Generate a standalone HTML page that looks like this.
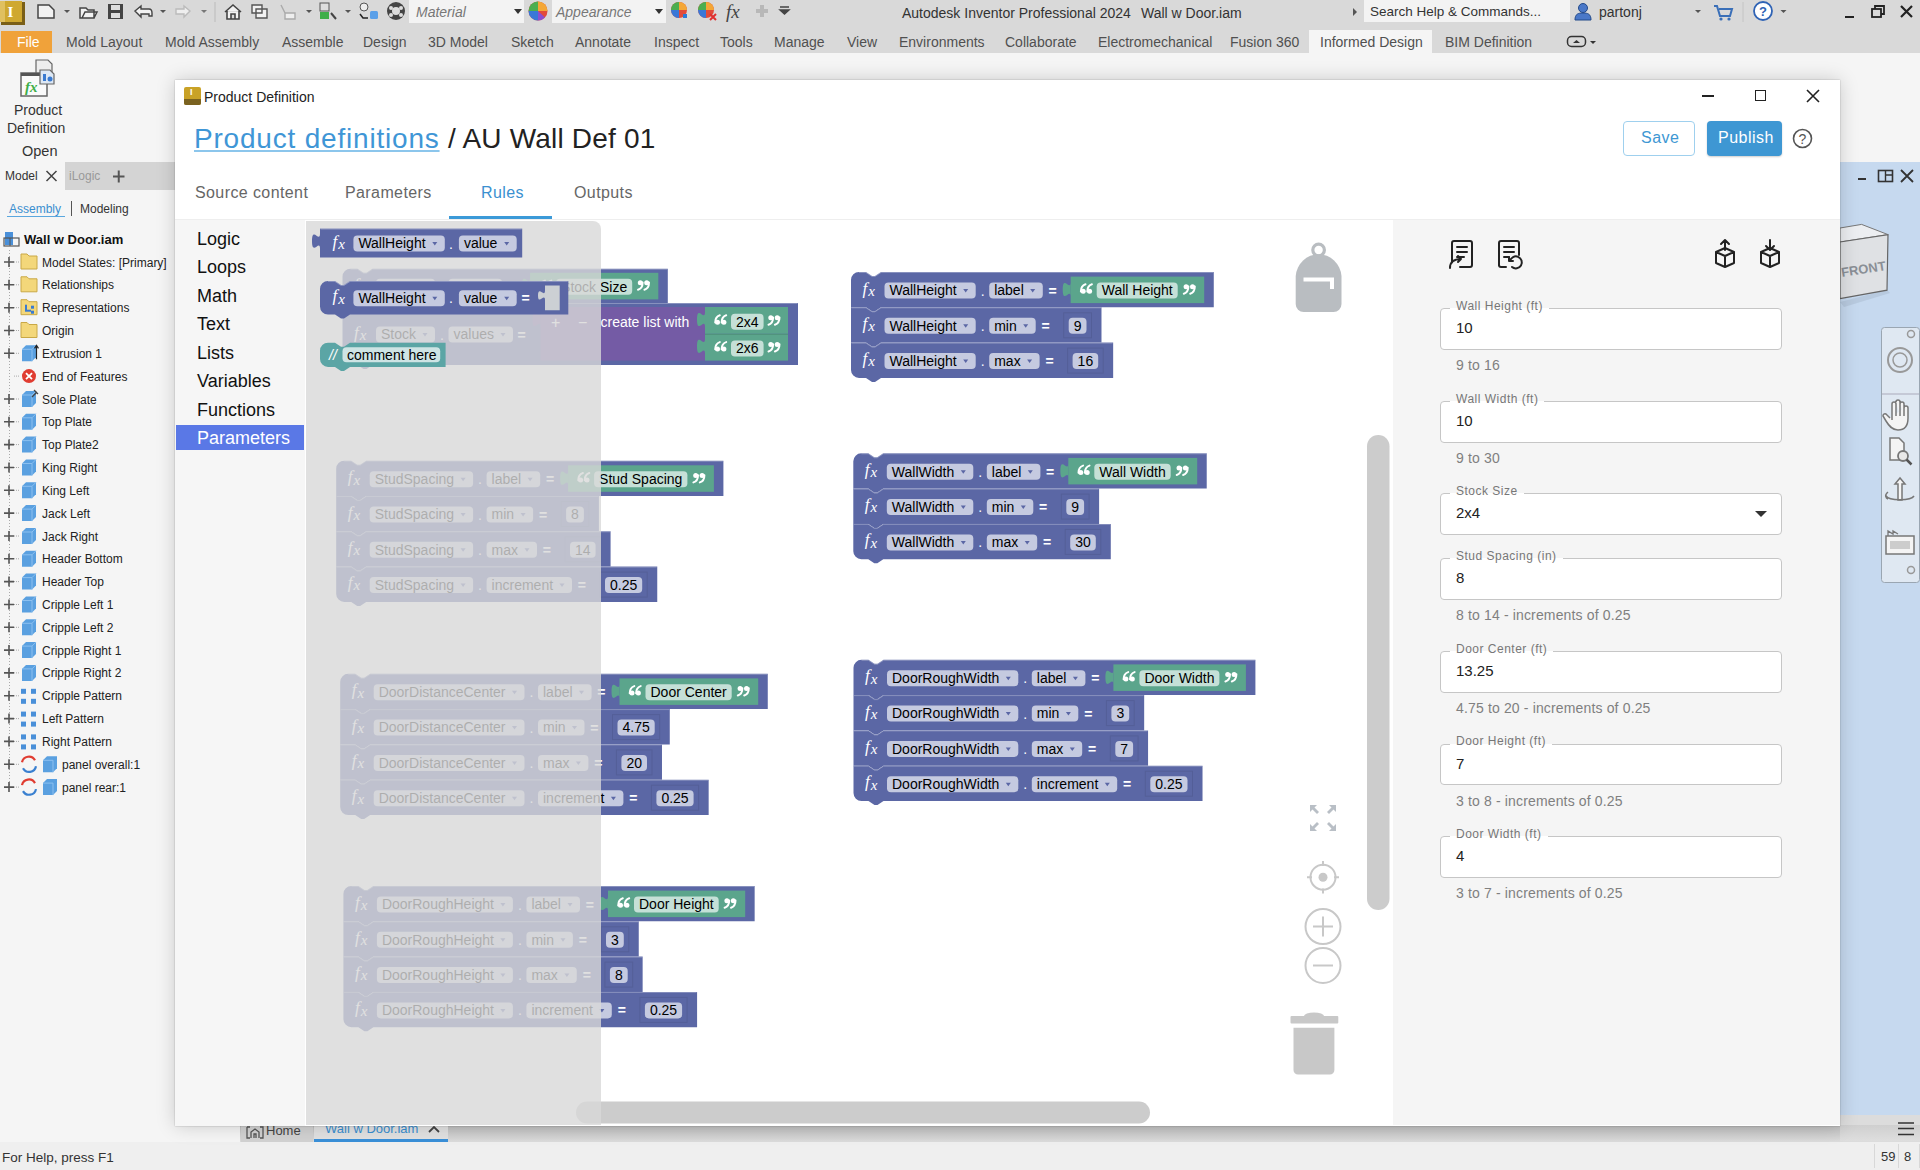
<!DOCTYPE html><html><head><meta charset="utf-8"><style>
*{margin:0;padding:0;box-sizing:border-box}
html,body{width:1920px;height:1170px;overflow:hidden;background:#f5f5f5;font-family:"Liberation Sans",sans-serif;position:relative}
.a{position:absolute}
.t{position:absolute;white-space:nowrap;line-height:1}
</style></head><body>
<div class="a" style="left:0px;top:0px;width:1920px;height:53px;background:#d9d9d9"></div><div class="a" style="left:0px;top:53px;width:1920px;height:109px;background:#f5f5f5"></div><div class="a" style="left:1px;top:31px;width:51px;height:22px;background:#f0a23a"></div><div class="t" style="left:17px;top:35px;font-size:14px;color:#fff;">File</div><div class="a" style="left:1309px;top:30px;width:123px;height:23px;background:#f5f5f5"></div><div class="t" style="left:66px;top:35px;font-size:14px;color:#505050;">Mold Layout</div><div class="t" style="left:165px;top:35px;font-size:14px;color:#505050;">Mold Assembly</div><div class="t" style="left:282px;top:35px;font-size:14px;color:#505050;">Assemble</div><div class="t" style="left:363px;top:35px;font-size:14px;color:#505050;">Design</div><div class="t" style="left:428px;top:35px;font-size:14px;color:#505050;">3D Model</div><div class="t" style="left:511px;top:35px;font-size:14px;color:#505050;">Sketch</div><div class="t" style="left:575px;top:35px;font-size:14px;color:#505050;">Annotate</div><div class="t" style="left:654px;top:35px;font-size:14px;color:#505050;">Inspect</div><div class="t" style="left:720px;top:35px;font-size:14px;color:#505050;">Tools</div><div class="t" style="left:774px;top:35px;font-size:14px;color:#505050;">Manage</div><div class="t" style="left:847px;top:35px;font-size:14px;color:#505050;">View</div><div class="t" style="left:899px;top:35px;font-size:14px;color:#505050;">Environments</div><div class="t" style="left:1005px;top:35px;font-size:14px;color:#505050;">Collaborate</div><div class="t" style="left:1098px;top:35px;font-size:14px;color:#505050;">Electromechanical</div><div class="t" style="left:1230px;top:35px;font-size:14px;color:#505050;">Fusion 360</div><div class="t" style="left:1320px;top:35px;font-size:14px;color:#505050;">Informed Design</div><div class="t" style="left:1445px;top:35px;font-size:14px;color:#505050;">BIM Definition</div><svg class="a" style="left:1566px;top:34px" width="34" height="16"><rect x="1.5" y="2.5" width="18" height="10" rx="4" stroke="#333" stroke-width="1.5" fill="none"/><path d="M7,9 l3.5,-3 3.5,3 z" fill="#333"/><path d="M24,7 h6 l-3,3 z" fill="#333"/></svg><div class="t" style="left:902px;top:6px;font-size:14px;color:#333;">Autodesk Inventor Professional 2024</div><div class="t" style="left:1141px;top:6px;font-size:14px;color:#333;">Wall w Door.iam</div><div class="a" style="left:409px;top:0px;width:115px;height:23px;background:#f3f3f3"></div><div class="t" style="left:416px;top:5px;font-size:14px;color:#777;font-style:italic">Material</div><div class="a" style="left:552px;top:0px;width:114px;height:23px;background:#f3f3f3"></div><div class="t" style="left:556px;top:5px;font-size:14px;color:#777;font-style:italic">Appearance</div><div class="a" style="left:1364px;top:0px;width:206px;height:22px;background:#f3f3f3"></div><div class="t" style="left:1370px;top:5px;font-size:13.5px;color:#333;">Search Help &amp; Commands...</div><div class="t" style="left:1599px;top:5px;font-size:14px;color:#333;">partonj</div><svg class="a" style="left:0;top:0" width="1920" height="30">
<path d="M1353,8 l4,4 -4,4 z" fill="#555"/>
<circle cx="1583" cy="8" r="4.5" fill="#4a78c8" stroke="#234a8a"/><path d="M1575,20 c0,-6 3,-7 8,-7 s8,1 8,7 z" fill="#4a78c8" stroke="#234a8a"/>
<path d="M1695,10 h6 l-3,3 z" fill="#555"/>
<path d="M1714,6 h3 l3,10 h10 l2,-7 h-13" stroke="#3a6fb8" stroke-width="2" fill="none"/><circle cx="1721" cy="19" r="1.6" fill="#3a6fb8"/><circle cx="1729" cy="19" r="1.6" fill="#3a6fb8"/>
<path d="M1743,2 v20" stroke="#c4c4c4"/>
<circle cx="1763" cy="11" r="9" stroke="#2f63b5" stroke-width="1.8" fill="#fff"/><text x="1763" y="16" text-anchor="middle" font-size="13" font-weight="bold" fill="#2f63b5" font-family="Liberation Sans">?</text>
<path d="M1780.5,10 h6 l-3,3 z" fill="#555"/>
<path d="M1845,17 h9" stroke="#222" stroke-width="2"/>
<rect x="1872" y="9" width="9" height="8" stroke="#222" stroke-width="1.8" fill="none"/><path d="M1875,9 v-3 h9 v8 h-3" stroke="#222" stroke-width="1.8" fill="none"/>
<path d="M1901,6 l11,11 M1912,6 l-11,11" stroke="#222" stroke-width="2.2"/>
<rect x="1" y="2" width="24" height="23" fill="#7a5f17"/><rect x="0" y="1" width="22" height="21" fill="#cfa830"/><rect x="0" y="1" width="5" height="21" fill="#e0c060"/>
<text x="10.5" y="17" text-anchor="middle" font-size="15" font-weight="bold" fill="#fff" font-family="Liberation Serif">I</text>
<path d="M38,5 h11 l5,5 v8 h-16 z" stroke="#444" stroke-width="1.5" fill="#f2f2f2"/><path d="M64,10 h6 l-3,3 z" fill="#555"/>
<path d="M80,8 h6 l2,2 h6 v8 h-14 z M82,18 l3,-6 h12 l-3,6" stroke="#444" stroke-width="1.5" fill="#f2f2f2"/>
<path d="M108,4 h15 v15 h-15 z" fill="#444"/><rect x="111" y="5" width="9" height="5" fill="#ddd"/><rect x="111" y="13" width="9" height="5" fill="#ddd"/>
<path d="M135,11 l6,-5 v3 h8 c2,0 3,2 3,4 v3 h-3 v-2 h-8 v3 z" stroke="#444" stroke-width="1.4" fill="#f2f2f2"/><path d="M160,10 h6 l-3,3 z" fill="#555"/>
<path d="M190,11 l-6,-5 v3 h-8 v5 h8 v3 z" stroke="#bbb" stroke-width="1.4" fill="#eee"/><path d="M201,10 h6 l-3,3 z" fill="#777"/>
<path d="M215,2 v20" stroke="#bbb"/>
<path d="M225,12 l8,-7 8,7 M227,11 v8 h12 v-8 M231,19 v-5 h4 v5" stroke="#444" stroke-width="1.6" fill="#f2f2f2"/>
<path d="M252,5 h10 v8 h-10 z M256,9 h11 v9 h-11 z" stroke="#555" stroke-width="1.4" fill="#f2f2f2"/>
<path d="M281,5 l4,8 M285,13 h10 v6 h-10 z" stroke="#aaa" stroke-width="1.4" fill="#eee"/><path d="M306,10 h6 l-3,3 z" fill="#555"/>
<rect x="320" y="3" width="9" height="8" stroke="#555" fill="#ddd"/><rect x="320" y="12" width="9" height="7" fill="#3fae49"/><path d="M331,13 l5,6" stroke="#444" stroke-width="2"/><path d="M345,10 h6 l-3,3 z" fill="#555"/>
<circle cx="364" cy="7" r="4" stroke="#555" fill="#eee"/><path d="M360,14 l3,4 h5" stroke="#222" stroke-width="1.5" fill="none"/><rect x="370" y="11" width="8" height="8" rx="1.5" fill="#5ba0e8"/>
<circle cx="396" cy="11" r="9" fill="#444"/><circle cx="396" cy="11" r="4" fill="#ddd"/><circle cx="391" cy="8" r="2" fill="#ddd"/><circle cx="401" cy="8" r="2" fill="#ddd"/><circle cx="391" cy="15" r="2" fill="#ddd"/><circle cx="401" cy="15" r="2" fill="#ddd"/>
<path d="M514,9 h8 l-4,5 z" fill="#333"/>
<circle cx="538" cy="11" r="9.5" fill="#e24b3b"/><path d="M538,11 L538,1.5 A9.5,9.5 0 0 1 547.5,11 z" fill="#f4a736"/><path d="M538,11 L528.5,11 A9.5,9.5 0 0 1 538,1.5 z" fill="#4cae4f"/><path d="M538,11 L528.5,11 A9.5,9.5 0 0 0 538,20.5 z" fill="#3a78d8"/><path d="M538,11 L538,20.5 A9.5,9.5 0 0 0 545,17.5 z" fill="#8a4fd0"/>
<path d="M655,9 h8 l-4,5 z" fill="#333"/>
<circle cx="679" cy="10" r="8" fill="#e24b3b"/><path d="M679,10 L679,2 A8,8 0 0 1 687,10 z" fill="#f4a736"/><path d="M679,10 L671,10 A8,8 0 0 1 679,2 z" fill="#4cae4f"/><path d="M679,10 L671,10 A8,8 0 0 0 679,18 z" fill="#3a78d8"/><rect x="683" y="14" width="4" height="4" fill="#2a7ad8"/>
<circle cx="706" cy="10" r="8" fill="#e24b3b"/><path d="M706,10 L706,2 A8,8 0 0 1 714,10 z" fill="#f4a736"/><path d="M706,10 L698,10 A8,8 0 0 1 706,2 z" fill="#4cae4f"/><path d="M706,10 L698,10 A8,8 0 0 0 706,18 z" fill="#3a78d8"/><path d="M710,14 l6,6 M716,14 l-6,6" stroke="#e03030" stroke-width="2"/>
<text x="726" y="18" font-size="19" font-style="italic" fill="#444" font-family="Liberation Serif">fx</text>
<path d="M756,11 h12 M762,5 v12" stroke="#b8b8b8" stroke-width="4"/>
<path d="M780,7 h9 M780,10 h9 l-4.5,4 z" stroke="#444" stroke-width="1.4" fill="#444"/>
</svg><div class="t" style="left:14px;top:103px;font-size:14px;color:#333;">Product</div><div class="t" style="left:7px;top:121px;font-size:14px;color:#333;">Definition</div><div class="t" style="left:22px;top:144px;font-size:14.5px;color:#333;">Open</div><div class="a" style="left:0px;top:162px;width:175px;height:28px;background:#d4d4d4"></div><div class="a" style="left:0px;top:162px;width:65px;height:28px;background:#f5f5f5"></div><div class="t" style="left:5px;top:170px;font-size:12px;color:#333;">Model</div><div class="t" style="left:69px;top:170px;font-size:12px;color:#999;">iLogic</div><div class="t" style="left:9px;top:203px;font-size:12px;color:#3a8fd0;">Assembly</div><div class="a" style="left:7px;top:216px;width:58px;height:1px;background:#5aa7df"></div><div class="a" style="left:71px;top:201px;width:1px;height:15px;background:#555"></div><div class="t" style="left:80px;top:203px;font-size:12px;color:#333;">Modeling</div><svg class="a" style="left:0;top:0" width="180" height="800">
<path d="M46.5,171 l10,10 M56.5,171 l-10,10" stroke="#444" stroke-width="1.5"/>
<path d="M113,176.5 h11.5 M118.75,170.5 v12" stroke="#555" stroke-width="2"/>
<path d="M9.5,250 V787" stroke="#aaa" stroke-dasharray="1,2"/>
<rect x="5" y="232" width="8" height="13" fill="#4a90d9"/><rect x="4" y="238" width="15" height="8" fill="none" stroke="#555" stroke-width="1.2"/>
<path d="M10,238 v8" stroke="#555" stroke-width="1"/>
<path d="M4,262.0 h10 M9,257.0 v10" stroke="#555" stroke-width="1.6"/><path d="M14,262.0 h5" stroke="#aaa" stroke-dasharray="1,1"/><path d="M21,254.0 h6 l2,2 h8 v13 h-16 z" fill="#f3d77a" stroke="#c9a846" stroke-width="1"/><text x="42" y="266.5" font-size="12" fill="#222" font-family="Liberation Sans">Model States: [Primary]</text><path d="M4,284.8 h10 M9,279.8 v10" stroke="#555" stroke-width="1.6"/><path d="M14,284.8 h5" stroke="#aaa" stroke-dasharray="1,1"/><path d="M21,276.8 h6 l2,2 h8 v13 h-16 z" fill="#f3d77a" stroke="#c9a846" stroke-width="1"/><text x="42" y="289.3" font-size="12" fill="#222" font-family="Liberation Sans">Relationships</text><path d="M4,307.7 h10 M9,302.7 v10" stroke="#555" stroke-width="1.6"/><path d="M14,307.7 h5" stroke="#aaa" stroke-dasharray="1,1"/><path d="M21,299.7 h6 l2,2 h8 v13 h-16 z" fill="#f3d77a" stroke="#c9a846" stroke-width="1"/><rect x="25" y="304.7" width="2" height="6" fill="#3a7ad0"/><rect x="25" y="309.7" width="6" height="2" fill="#3a7ad0"/><rect x="31" y="305.7" width="3" height="3" fill="#3a7ad0"/><rect x="31" y="310.7" width="3" height="3" fill="#3a7ad0"/><text x="42" y="312.2" font-size="12" fill="#222" font-family="Liberation Sans">Representations</text><path d="M4,330.5 h10 M9,325.5 v10" stroke="#555" stroke-width="1.6"/><path d="M14,330.5 h5" stroke="#aaa" stroke-dasharray="1,1"/><path d="M21,322.5 h6 l2,2 h8 v13 h-16 z" fill="#f3d77a" stroke="#c9a846" stroke-width="1"/><text x="42" y="335.0" font-size="12" fill="#222" font-family="Liberation Sans">Origin</text><path d="M4,353.3 h10 M9,348.3 v10" stroke="#555" stroke-width="1.6"/><path d="M14,353.3 h5" stroke="#aaa" stroke-dasharray="1,1"/><path d="M22,349.3 l4,-4 h10 v12 l-4,4 h-10 z" fill="#5aa0e0"/><path d="M22,349.3 h10 v12" stroke="#8cc0f0" fill="none"/><path d="M32,349.3 l4,-4" stroke="#8cc0f0"/><path d="M36.5,359.3 V345.3 M34.5,348.3 l2,-3 2,3" stroke="#222" stroke-width="1.2" fill="none"/><text x="42" y="357.8" font-size="12" fill="#222" font-family="Liberation Sans">Extrusion 1</text><path d="M14,376.1 h5" stroke="#aaa" stroke-dasharray="1,1"/><circle cx="29" cy="376.1" r="7" fill="#e03c31"/><path d="M26,373.1 l6,6 M32,373.1 l-6,6" stroke="#fff" stroke-width="1.8"/><text x="42" y="380.6" font-size="12" fill="#222" font-family="Liberation Sans">End of Features</text><path d="M4,399.0 h10 M9,394.0 v10" stroke="#555" stroke-width="1.6"/><path d="M14,399.0 h5" stroke="#aaa" stroke-dasharray="1,1"/><path d="M22,395.0 l4,-4 h10 v12 l-4,4 h-10 z" fill="#5aa0e0"/><path d="M22,395.0 h10 v12" stroke="#8cc0f0" fill="none"/><path d="M32,395.0 l4,-4" stroke="#8cc0f0"/><path d="M32,397.0 l5,-5 M34,390.0 l4,4" stroke="#444" stroke-width="1.3" fill="none"/><text x="42" y="403.5" font-size="12" fill="#222" font-family="Liberation Sans">Sole Plate</text><path d="M4,421.8 h10 M9,416.8 v10" stroke="#555" stroke-width="1.6"/><path d="M14,421.8 h5" stroke="#aaa" stroke-dasharray="1,1"/><path d="M22,417.8 l4,-4 h10 v12 l-4,4 h-10 z" fill="#5aa0e0"/><path d="M22,417.8 h10 v12" stroke="#8cc0f0" fill="none"/><path d="M32,417.8 l4,-4" stroke="#8cc0f0"/><text x="42" y="426.3" font-size="12" fill="#222" font-family="Liberation Sans">Top Plate</text><path d="M4,444.6 h10 M9,439.6 v10" stroke="#555" stroke-width="1.6"/><path d="M14,444.6 h5" stroke="#aaa" stroke-dasharray="1,1"/><path d="M22,440.6 l4,-4 h10 v12 l-4,4 h-10 z" fill="#5aa0e0"/><path d="M22,440.6 h10 v12" stroke="#8cc0f0" fill="none"/><path d="M32,440.6 l4,-4" stroke="#8cc0f0"/><text x="42" y="449.1" font-size="12" fill="#222" font-family="Liberation Sans">Top Plate2</text><path d="M4,467.5 h10 M9,462.5 v10" stroke="#555" stroke-width="1.6"/><path d="M14,467.5 h5" stroke="#aaa" stroke-dasharray="1,1"/><path d="M22,463.5 l4,-4 h10 v12 l-4,4 h-10 z" fill="#5aa0e0"/><path d="M22,463.5 h10 v12" stroke="#8cc0f0" fill="none"/><path d="M32,463.5 l4,-4" stroke="#8cc0f0"/><text x="42" y="472.0" font-size="12" fill="#222" font-family="Liberation Sans">King Right</text><path d="M4,490.3 h10 M9,485.3 v10" stroke="#555" stroke-width="1.6"/><path d="M14,490.3 h5" stroke="#aaa" stroke-dasharray="1,1"/><path d="M22,486.3 l4,-4 h10 v12 l-4,4 h-10 z" fill="#5aa0e0"/><path d="M22,486.3 h10 v12" stroke="#8cc0f0" fill="none"/><path d="M32,486.3 l4,-4" stroke="#8cc0f0"/><text x="42" y="494.8" font-size="12" fill="#222" font-family="Liberation Sans">King Left</text><path d="M4,513.1 h10 M9,508.1 v10" stroke="#555" stroke-width="1.6"/><path d="M14,513.1 h5" stroke="#aaa" stroke-dasharray="1,1"/><path d="M22,509.1 l4,-4 h10 v12 l-4,4 h-10 z" fill="#5aa0e0"/><path d="M22,509.1 h10 v12" stroke="#8cc0f0" fill="none"/><path d="M32,509.1 l4,-4" stroke="#8cc0f0"/><text x="42" y="517.6" font-size="12" fill="#222" font-family="Liberation Sans">Jack Left</text><path d="M4,536.0 h10 M9,531.0 v10" stroke="#555" stroke-width="1.6"/><path d="M14,536.0 h5" stroke="#aaa" stroke-dasharray="1,1"/><path d="M22,532.0 l4,-4 h10 v12 l-4,4 h-10 z" fill="#5aa0e0"/><path d="M22,532.0 h10 v12" stroke="#8cc0f0" fill="none"/><path d="M32,532.0 l4,-4" stroke="#8cc0f0"/><text x="42" y="540.5" font-size="12" fill="#222" font-family="Liberation Sans">Jack Right</text><path d="M4,558.8 h10 M9,553.8 v10" stroke="#555" stroke-width="1.6"/><path d="M14,558.8 h5" stroke="#aaa" stroke-dasharray="1,1"/><path d="M22,554.8 l4,-4 h10 v12 l-4,4 h-10 z" fill="#5aa0e0"/><path d="M22,554.8 h10 v12" stroke="#8cc0f0" fill="none"/><path d="M32,554.8 l4,-4" stroke="#8cc0f0"/><text x="42" y="563.3" font-size="12" fill="#222" font-family="Liberation Sans">Header Bottom</text><path d="M4,581.6 h10 M9,576.6 v10" stroke="#555" stroke-width="1.6"/><path d="M14,581.6 h5" stroke="#aaa" stroke-dasharray="1,1"/><path d="M22,577.6 l4,-4 h10 v12 l-4,4 h-10 z" fill="#5aa0e0"/><path d="M22,577.6 h10 v12" stroke="#8cc0f0" fill="none"/><path d="M32,577.6 l4,-4" stroke="#8cc0f0"/><text x="42" y="586.1" font-size="12" fill="#222" font-family="Liberation Sans">Header Top</text><path d="M4,604.5 h10 M9,599.5 v10" stroke="#555" stroke-width="1.6"/><path d="M14,604.5 h5" stroke="#aaa" stroke-dasharray="1,1"/><path d="M22,600.5 l4,-4 h10 v12 l-4,4 h-10 z" fill="#5aa0e0"/><path d="M22,600.5 h10 v12" stroke="#8cc0f0" fill="none"/><path d="M32,600.5 l4,-4" stroke="#8cc0f0"/><text x="42" y="609.0" font-size="12" fill="#222" font-family="Liberation Sans">Cripple Left 1</text><path d="M4,627.3 h10 M9,622.3 v10" stroke="#555" stroke-width="1.6"/><path d="M14,627.3 h5" stroke="#aaa" stroke-dasharray="1,1"/><path d="M22,623.3 l4,-4 h10 v12 l-4,4 h-10 z" fill="#5aa0e0"/><path d="M22,623.3 h10 v12" stroke="#8cc0f0" fill="none"/><path d="M32,623.3 l4,-4" stroke="#8cc0f0"/><text x="42" y="631.8" font-size="12" fill="#222" font-family="Liberation Sans">Cripple Left 2</text><path d="M4,650.1 h10 M9,645.1 v10" stroke="#555" stroke-width="1.6"/><path d="M14,650.1 h5" stroke="#aaa" stroke-dasharray="1,1"/><path d="M22,646.1 l4,-4 h10 v12 l-4,4 h-10 z" fill="#5aa0e0"/><path d="M22,646.1 h10 v12" stroke="#8cc0f0" fill="none"/><path d="M32,646.1 l4,-4" stroke="#8cc0f0"/><text x="42" y="654.6" font-size="12" fill="#222" font-family="Liberation Sans">Cripple Right 1</text><path d="M4,672.9 h10 M9,667.9 v10" stroke="#555" stroke-width="1.6"/><path d="M14,672.9 h5" stroke="#aaa" stroke-dasharray="1,1"/><path d="M22,668.9 l4,-4 h10 v12 l-4,4 h-10 z" fill="#5aa0e0"/><path d="M22,668.9 h10 v12" stroke="#8cc0f0" fill="none"/><path d="M32,668.9 l4,-4" stroke="#8cc0f0"/><text x="42" y="677.4" font-size="12" fill="#222" font-family="Liberation Sans">Cripple Right 2</text><path d="M4,695.8 h10 M9,690.8 v10" stroke="#555" stroke-width="1.6"/><path d="M14,695.8 h5" stroke="#aaa" stroke-dasharray="1,1"/><rect x="21" y="688.8" width="5" height="5" fill="#4a90d9"/><rect x="31" y="688.8" width="5" height="5" fill="#4a90d9"/><rect x="21" y="698.8" width="5" height="5" fill="#4a90d9"/><rect x="31" y="698.8" width="5" height="5" fill="#4a90d9"/><text x="42" y="700.3" font-size="12" fill="#222" font-family="Liberation Sans">Cripple Pattern</text><path d="M4,718.6 h10 M9,713.6 v10" stroke="#555" stroke-width="1.6"/><path d="M14,718.6 h5" stroke="#aaa" stroke-dasharray="1,1"/><rect x="21" y="711.6" width="5" height="5" fill="#4a90d9"/><rect x="31" y="711.6" width="5" height="5" fill="#4a90d9"/><rect x="21" y="721.6" width="5" height="5" fill="#4a90d9"/><rect x="31" y="721.6" width="5" height="5" fill="#4a90d9"/><text x="42" y="723.1" font-size="12" fill="#222" font-family="Liberation Sans">Left Pattern</text><path d="M4,741.4 h10 M9,736.4 v10" stroke="#555" stroke-width="1.6"/><path d="M14,741.4 h5" stroke="#aaa" stroke-dasharray="1,1"/><rect x="21" y="734.4" width="5" height="5" fill="#4a90d9"/><rect x="31" y="734.4" width="5" height="5" fill="#4a90d9"/><rect x="21" y="744.4" width="5" height="5" fill="#4a90d9"/><rect x="31" y="744.4" width="5" height="5" fill="#4a90d9"/><text x="42" y="745.9" font-size="12" fill="#222" font-family="Liberation Sans">Right Pattern</text><path d="M4,764.3 h10 M9,759.3 v10" stroke="#555" stroke-width="1.6"/><path d="M14,764.3 h5" stroke="#aaa" stroke-dasharray="1,1"/><path d="M22,762.3 a7,7 0 0 1 13,-2" stroke="#e03c31" stroke-width="2.2" fill="none"/><path d="M36,766.3 a7,7 0 0 1 -13,2" stroke="#3a80d0" stroke-width="2.2" fill="none"/><path d="M43,760.3 l4,-4 h10 v12 l-4,4 h-10 z" fill="#5aa0e0"/><path d="M43,760.3 h10 v12" stroke="#8cc0f0" fill="none"/><text x="62" y="768.8" font-size="12" fill="#222" font-family="Liberation Sans">panel overall:1</text><path d="M4,787.1 h10 M9,782.1 v10" stroke="#555" stroke-width="1.6"/><path d="M14,787.1 h5" stroke="#aaa" stroke-dasharray="1,1"/><path d="M22,785.1 a7,7 0 0 1 13,-2" stroke="#e03c31" stroke-width="2.2" fill="none"/><path d="M36,789.1 a7,7 0 0 1 -13,2" stroke="#3a80d0" stroke-width="2.2" fill="none"/><path d="M43,783.1 l4,-4 h10 v12 l-4,4 h-10 z" fill="#5aa0e0"/><path d="M43,783.1 h10 v12" stroke="#8cc0f0" fill="none"/><text x="62" y="791.6" font-size="12" fill="#222" font-family="Liberation Sans">panel rear:1</text><text x="24" y="243.5" font-size="13" font-weight="bold" fill="#111" font-family="Liberation Sans">Wall w Door.iam</text></svg><svg class="a" style="left:18px;top:58px" width="42" height="42">
<path d="M18,2 h12 l4,4 v10 h-16 z" fill="#eee" stroke="#666" stroke-width="1.2"/>
<rect x="3" y="15" width="26" height="23" fill="#fafafa" stroke="#666" stroke-width="1.5"/><rect x="3" y="15" width="26" height="3" fill="#555"/>
<text x="7" y="34" font-size="15" font-style="italic" font-weight="bold" fill="#3fae49" font-family="Liberation Serif">fx</text>
<path d="M22,12 h10 l4,4 v10 h-14 z" fill="#dde8f5" stroke="#666" stroke-width="1.2"/><rect x="25" y="16" width="3" height="7" fill="#3a7ad0"/><circle cx="32" cy="21" r="2.5" fill="#3a7ad0"/>
</svg><div class="a" style="left:0px;top:1142px;width:1920px;height:28px;background:#efefef"></div><div class="t" style="left:2px;top:1151px;font-size:13.5px;color:#333;">For Help, press F1</div><div class="a" style="left:1840px;top:162px;width:80px;height:953px;background:#c6d9ef"></div><div class="a" style="left:1840px;top:1115px;width:80px;height:27px;background:#dcdcdc"></div><svg class="a" style="left:1840px;top:162px" width="80" height="978">
<path d="M18,17 h8" stroke="#333" stroke-width="2"/>
<rect x="38.5" y="8.5" width="14" height="11" stroke="#333" stroke-width="1.6" fill="none"/><path d="M45.5,8.5 v11 M45.5,13 h7" stroke="#333" stroke-width="1.4"/>
<path d="M61,8 l12,12 M73,8 l-12,12" stroke="#333" stroke-width="1.8"/>
<path d="M0,140 L47,128 L50,131 L4,145 Z" fill="#aabbd0" opacity="0.5"/>
<path d="M0,66 L21.6,62.4 L48,72.6 L0,80 Z" fill="#eceef1" stroke="#777" stroke-width="1"/>
<path d="M0,80 L48,72.6 L47,128.2 L0,136.7 Z" fill="#dfe1e4" stroke="#666" stroke-width="1.2"/>
<text x="2" y="115" font-size="13" font-weight="bold" fill="#8a8f96" font-family="Liberation Sans" transform="rotate(-9 2 115)">FRONT</text>
<rect x="41.5" y="165.5" width="38" height="255" rx="3" fill="#dfe8f2" stroke="#9aa6b2"/>
<circle cx="71" cy="172" r="3.5" fill="none" stroke="#999" stroke-width="1.5"/>
<circle cx="71" cy="408" r="3.5" fill="none" stroke="#999" stroke-width="1.5"/>
<circle cx="60" cy="198" r="12" fill="none" stroke="#999" stroke-width="2"/><circle cx="60" cy="198" r="7" fill="none" stroke="#999" stroke-width="1.5"/>
<path d="M42,232 h37" stroke="#aab"/>
<path d="M52,258 v-16 a2,2 0 0 1 4,0 v12 M56,240 a2,2 0 0 1 4,0 v14 M60,242 a2,2 0 0 1 4,0 v12 M64,246 a2,2 0 0 1 4,0 v10 c0,8 -4,12 -10,12 c-6,0 -9,-4 -12,-9 l-3,-5 a2,2 0 0 1 3,-2 l4,4" stroke="#777" stroke-width="1.5" fill="#f4f4f4"/>
<path d="M50,276 h9 l5,5 v17 h-14 z" stroke="#777" stroke-width="1.5" fill="#f4f4f4"/><circle cx="63" cy="294" r="5" stroke="#777" stroke-width="1.8" fill="#e8e8e8"/><path d="M66.5,297.5 l5,5" stroke="#555" stroke-width="2.5"/>
<path d="M60,316 l-5,6 h3 v16 h4 v-16 h3 z" stroke="#777" stroke-width="1.5" fill="#f4f4f4"/><path d="M46,334 c3,5 25,5 28,0 M48,330 c-4,3 -2,6 0,7" stroke="#777" stroke-width="1.5" fill="none"/>
<rect x="46" y="374" width="28" height="18" stroke="#777" stroke-width="1.5" fill="#f4f4f4"/><rect x="50" y="379" width="20" height="8" fill="#ccc"/><path d="M48,374 v-5 l5,3 v-3 l5,3" stroke="#777" stroke-width="1.3" fill="none"/>
</svg><div class="a" style="left:240px;top:1125px;width:1600px;height:17px;background:linear-gradient(#bdbdbd,#dcdcdc)"></div><div class="a" style="left:241px;top:1125px;width:72px;height:17px;background:#d2d2d2"></div><div class="t" style="left:266px;top:1124px;font-size:13px;color:#444;">Home</div><svg class="a" style="left:245px;top:1124px" width="20" height="16"><path d="M2,3 h3 M2,3 v11 h3 M15,3 h3 v11 h-3 M6,14 v-6 l4,-3 4,3 v6 M9,14 v-4 h2 v4" stroke="#555" stroke-width="1.3" fill="none"/></svg><div class="a" style="left:314px;top:1125px;width:134px;height:14px;background:#e2e2e2"></div><div class="t" style="left:325px;top:1122px;font-size:13px;color:#3a8fd0;">Wall w Door.iam</div><svg class="a" style="left:427px;top:1124px" width="14" height="10"><path d="M2,8 l5,-5 5,5" stroke="#444" stroke-width="1.8" fill="none"/></svg><div class="a" style="left:314px;top:1138.5px;width:134px;height:3px;background:#3a90d8"></div><div class="a" style="left:1840px;top:1125px;width:80px;height:16px;background:linear-gradient(#cfcfcf,#dedede)"></div><svg class="a" style="left:1896px;top:1119px" width="20" height="18"><path d="M2,4 h16 M2,9.6 h16 M2,15.5 h16" stroke="#333" stroke-width="1.5"/></svg><div class="a" style="left:1874px;top:1144px;width:1px;height:24px;background:#d8d8d8"></div><div class="t" style="left:1881px;top:1150px;font-size:13px;color:#333;">59</div><div class="t" style="left:1904px;top:1150px;font-size:13px;color:#333;">8</div><div class="a" style="left:1898px;top:1144px;width:1px;height:24px;background:#d8d8d8"></div><div class="a" style="left:1919px;top:1144px;width:1px;height:24px;background:#d8d8d8"></div><div class="a" style="left:175px;top:80px;width:1665px;height:1046px;background:#fff;box-shadow:0 0 1.5px rgba(0,0,0,0.28),0 0 18px rgba(0,0,0,0.18)"></div><div class="t" style="left:204px;top:90px;font-size:14px;color:#222;">Product Definition</div><div class="t" style="left:194px;top:125px;font-size:28px;color:#3f96d6;letter-spacing:0.8px;text-decoration:underline;text-decoration-color:#8cc6ec;text-decoration-thickness:1.5px;text-underline-offset:2px">Product definitions</div><div class="t" style="left:448px;top:125px;font-size:28px;color:#222;letter-spacing:0.2px">/ AU Wall Def 01</div><div class="t" style="left:195px;top:185px;font-size:16px;color:#666;letter-spacing:0.4px">Source content</div><div class="t" style="left:345px;top:185px;font-size:16px;color:#666;letter-spacing:0.4px">Parameters</div><div class="t" style="left:481px;top:185px;font-size:16px;color:#3a90d0;letter-spacing:0.4px">Rules</div><div class="t" style="left:574px;top:185px;font-size:16px;color:#666;letter-spacing:0.4px">Outputs</div><div class="a" style="left:449px;top:216px;width:103px;height:3px;background:#3c9ad8"></div><div class="a" style="left:175px;top:219px;width:1665px;height:1px;background:#eee"></div><div class="a" style="left:175px;top:220px;width:130px;height:906px;background:#f6f6f6"></div><div class="a" style="left:176px;top:425.2px;width:128px;height:25px;background:#5a78e6"></div><div class="t" style="left:197px;top:229.5px;font-size:18px;color:#111;">Logic</div><div class="t" style="left:197px;top:258.07px;font-size:18px;color:#111;">Loops</div><div class="t" style="left:197px;top:286.64px;font-size:18px;color:#111;">Math</div><div class="t" style="left:197px;top:315.21000000000004px;font-size:18px;color:#111;">Text</div><div class="t" style="left:197px;top:343.78px;font-size:18px;color:#111;">Lists</div><div class="t" style="left:197px;top:372.35px;font-size:18px;color:#111;">Variables</div><div class="t" style="left:197px;top:400.92px;font-size:18px;color:#111;">Functions</div><div class="t" style="left:197px;top:429.49px;font-size:18px;color:#fff;">Parameters</div><svg class="a" style="left:0;top:0" width="1920" height="1170" font-family="Liberation Sans"><defs><clipPath id="ws"><rect x="305" y="220" width="1088" height="905"/></clipPath></defs><g clip-path="url(#ws)"><path d="M851,280.0 a8,8 0 0 1 8,-8 L866,272.0 l6,4 l3,0 l6,-4 L1213.765625,272.0 L1213.765625,307.3 L881,307.3 l-6,4 l-3,0 l-6,-4 L851,307.3 Z" fill="#5b67a5"/><path d="M859,272.5 L866,272.5 l6,4 l3,0 l6,-4 L1213.265625,272.5" stroke="rgba(255,255,255,0.28)" fill="none"/><text x="862.5" y="293.5" font-family="Liberation Serif" font-style="italic" font-size="17" fill="#fff">f</text><text x="868.3" y="295.8" font-family="Liberation Serif" font-style="italic" font-size="15" fill="#fff">x</text><rect x="884.5" y="282.5" width="91.2" height="16" rx="4" fill="#fff" fill-opacity="0.65"/><text x="889.5" y="295.3" font-size="14" fill="#000" >WallHeight</text><path d="M963.2,289.0 h5 l-2.5,3.5 z" fill="#5b67a5"/><text x="980.7" y="295.5" font-size="14" fill="#fff" >.</text><rect x="989.2" y="282.5" width="53.6" height="16" rx="4" fill="#fff" fill-opacity="0.65"/><text x="994.2" y="295.3" font-size="14" fill="#000" >label</text><path d="M1030.2,289.0 h5 l-2.5,3.5 z" fill="#5b67a5"/><text x="1048.5" y="295.5" font-size="14" fill="#fff" font-weight="bold">=</text><path d="M1070.71875,282.0 c0,10 -8,-8 -8,7.5 s8,-2.5 8,7.5 Z" fill="#5ba58c"/><rect x="1070.7" y="276.6" width="133.5" height="26.5" fill="#5ba58c"/><g fill="#fff"><circle cx="1083.2" cy="291.3" r="2.5"/><path d="M1080.9,291.5 C1080.9,288.0 1082.7,285.2 1085.5,284.3" stroke="#fff" stroke-width="2" fill="none" stroke-linecap="round"/><circle cx="1089.6" cy="291.3" r="2.5"/><path d="M1087.3,291.5 C1087.3,288.0 1089.1,285.2 1091.9,284.3" stroke="#fff" stroke-width="2" fill="none" stroke-linecap="round"/></g><rect x="1096.7" y="282.5" width="81.0" height="16" rx="4" fill="#fff" fill-opacity="0.65"/><text x="1101.7" y="295.3" font-size="14" fill="#000" >Wall Height</text><g fill="#fff" transform="rotate(180 1189.4 289.0)"><circle cx="1186.3" cy="291.3" r="2.5"/><path d="M1184.0,291.5 C1184.0,288.0 1185.8,285.2 1188.6,284.3" stroke="#fff" stroke-width="2" fill="none" stroke-linecap="round"/><circle cx="1192.7" cy="291.3" r="2.5"/><path d="M1190.4,291.5 C1190.4,288.0 1192.2,285.2 1195.0,284.3" stroke="#fff" stroke-width="2" fill="none" stroke-linecap="round"/></g><path d="M851,307.3 L866,307.3 l6,4 l3,0 l6,-4 L1101.484375,307.3 L1101.484375,342.6 L881,342.6 l-6,4 l-3,0 l-6,-4 L851,342.6 Z" fill="#5b67a5"/><path d="M851.5,307.8 L866,307.8 l6,4 l3,0 l6,-4 L1100.984375,307.8" stroke="rgba(255,255,255,0.28)" fill="none"/><text x="862.5" y="328.8" font-family="Liberation Serif" font-style="italic" font-size="17" fill="#fff">f</text><text x="868.3" y="331.1" font-family="Liberation Serif" font-style="italic" font-size="15" fill="#fff">x</text><rect x="884.5" y="317.8" width="91.2" height="16" rx="4" fill="#fff" fill-opacity="0.65"/><text x="889.5" y="330.6" font-size="14" fill="#000" >WallHeight</text><path d="M963.2,324.3 h5 l-2.5,3.5 z" fill="#5b67a5"/><text x="980.7" y="330.8" font-size="14" fill="#fff" >.</text><rect x="989.2" y="317.8" width="46.5" height="16" rx="4" fill="#fff" fill-opacity="0.65"/><text x="994.2" y="330.6" font-size="14" fill="#000" >min</text><path d="M1023.2,324.3 h5 l-2.5,3.5 z" fill="#5b67a5"/><text x="1041.5" y="330.8" font-size="14" fill="#fff" font-weight="bold">=</text><rect x="1063.7" y="312.8" width="27.8" height="25" fill="none" stroke="#000" stroke-opacity="0.08"/><rect x="1068.7" y="317.8" width="17.8" height="16" rx="4" fill="#fff" fill-opacity="0.65"/><text x="1073.7" y="330.6" font-size="14" fill="#000" >9</text><path d="M851,342.6 L866,342.6 l6,4 l3,0 l6,-4 L1113.15625,342.6 L1113.15625,377.90000000000003 L881,377.90000000000003 l-6,4 l-3,0 l-6,-4 L859,377.90000000000003 a8,8 0 0 1 -8,-8 Z" fill="#5b67a5"/><path d="M851.5,343.1 L866,343.1 l6,4 l3,0 l6,-4 L1112.65625,343.1" stroke="rgba(255,255,255,0.28)" fill="none"/><text x="862.5" y="364.1" font-family="Liberation Serif" font-style="italic" font-size="17" fill="#fff">f</text><text x="868.3" y="366.4" font-family="Liberation Serif" font-style="italic" font-size="15" fill="#fff">x</text><rect x="884.5" y="353.1" width="91.2" height="16" rx="4" fill="#fff" fill-opacity="0.65"/><text x="889.5" y="365.9" font-size="14" fill="#000" >WallHeight</text><path d="M963.2,359.6 h5 l-2.5,3.5 z" fill="#5b67a5"/><text x="980.7" y="366.1" font-size="14" fill="#fff" >.</text><rect x="989.2" y="353.1" width="50.4" height="16" rx="4" fill="#fff" fill-opacity="0.65"/><text x="994.2" y="365.9" font-size="14" fill="#000" >max</text><path d="M1027.1,359.6 h5 l-2.5,3.5 z" fill="#5b67a5"/><text x="1045.4" y="366.1" font-size="14" fill="#fff" font-weight="bold">=</text><rect x="1067.6" y="348.1" width="35.6" height="25" fill="none" stroke="#000" stroke-opacity="0.08"/><rect x="1072.6" y="353.1" width="25.6" height="16" rx="4" fill="#fff" fill-opacity="0.65"/><text x="1077.6" y="365.9" font-size="14" fill="#000" >16</text><path d="M853.3,461.3 a8,8 0 0 1 8,-8 L868.3,453.3 l6,4 l3,0 l6,-4 L1206.721875,453.3 L1206.721875,488.6 L883.3,488.6 l-6,4 l-3,0 l-6,-4 L853.3,488.6 Z" fill="#5b67a5"/><path d="M861.3,453.8 L868.3,453.8 l6,4 l3,0 l6,-4 L1206.221875,453.8" stroke="rgba(255,255,255,0.28)" fill="none"/><text x="864.8" y="474.8" font-family="Liberation Serif" font-style="italic" font-size="17" fill="#fff">f</text><text x="870.6" y="477.1" font-family="Liberation Serif" font-style="italic" font-size="15" fill="#fff">x</text><rect x="886.8" y="463.8" width="86.5" height="16" rx="4" fill="#fff" fill-opacity="0.65"/><text x="891.8" y="476.6" font-size="14" fill="#000" >WallWidth</text><path d="M960.8,470.3 h5 l-2.5,3.5 z" fill="#5b67a5"/><text x="978.3" y="476.8" font-size="14" fill="#fff" >.</text><rect x="986.8" y="463.8" width="53.6" height="16" rx="4" fill="#fff" fill-opacity="0.65"/><text x="991.8" y="476.6" font-size="14" fill="#000" >label</text><path d="M1027.8,470.3 h5 l-2.5,3.5 z" fill="#5b67a5"/><text x="1046.1" y="476.8" font-size="14" fill="#fff" font-weight="bold">=</text><path d="M1068.346875,463.3 c0,10 -8,-8 -8,7.5 s8,-2.5 8,7.5 Z" fill="#5ba58c"/><rect x="1068.3" y="457.9" width="128.9" height="26.5" fill="#5ba58c"/><g fill="#fff"><circle cx="1080.8" cy="472.6" r="2.5"/><path d="M1078.5,472.8 C1078.5,469.3 1080.3,466.5 1083.1,465.6" stroke="#fff" stroke-width="2" fill="none" stroke-linecap="round"/><circle cx="1087.2" cy="472.6" r="2.5"/><path d="M1084.9,472.8 C1084.9,469.3 1086.7,466.5 1089.5,465.6" stroke="#fff" stroke-width="2" fill="none" stroke-linecap="round"/></g><rect x="1094.3" y="463.8" width="76.4" height="16" rx="4" fill="#fff" fill-opacity="0.65"/><text x="1099.3" y="476.6" font-size="14" fill="#000" >Wall Width</text><g fill="#fff" transform="rotate(180 1182.3 470.3)"><circle cx="1179.2" cy="472.6" r="2.5"/><path d="M1176.9,472.8 C1176.9,469.3 1178.7,466.5 1181.5,465.6" stroke="#fff" stroke-width="2" fill="none" stroke-linecap="round"/><circle cx="1185.6" cy="472.6" r="2.5"/><path d="M1183.3,472.8 C1183.3,469.3 1185.1,466.5 1187.9,465.6" stroke="#fff" stroke-width="2" fill="none" stroke-linecap="round"/></g><path d="M853.3,488.6 L868.3,488.6 l6,4 l3,0 l6,-4 L1099.1125,488.6 L1099.1125,523.9 L883.3,523.9 l-6,4 l-3,0 l-6,-4 L853.3,523.9 Z" fill="#5b67a5"/><path d="M853.8,489.1 L868.3,489.1 l6,4 l3,0 l6,-4 L1098.6125,489.1" stroke="rgba(255,255,255,0.28)" fill="none"/><text x="864.8" y="510.1" font-family="Liberation Serif" font-style="italic" font-size="17" fill="#fff">f</text><text x="870.6" y="512.4" font-family="Liberation Serif" font-style="italic" font-size="15" fill="#fff">x</text><rect x="886.8" y="499.1" width="86.5" height="16" rx="4" fill="#fff" fill-opacity="0.65"/><text x="891.8" y="511.9" font-size="14" fill="#000" >WallWidth</text><path d="M960.8,505.6 h5 l-2.5,3.5 z" fill="#5b67a5"/><text x="978.3" y="512.1" font-size="14" fill="#fff" >.</text><rect x="986.8" y="499.1" width="46.5" height="16" rx="4" fill="#fff" fill-opacity="0.65"/><text x="991.8" y="511.9" font-size="14" fill="#000" >min</text><path d="M1020.8,505.6 h5 l-2.5,3.5 z" fill="#5b67a5"/><text x="1039.1" y="512.1" font-size="14" fill="#fff" font-weight="bold">=</text><rect x="1061.3" y="494.1" width="27.8" height="25" fill="none" stroke="#000" stroke-opacity="0.08"/><rect x="1066.3" y="499.1" width="17.8" height="16" rx="4" fill="#fff" fill-opacity="0.65"/><text x="1071.3" y="511.9" font-size="14" fill="#000" >9</text><path d="M853.3,523.9 L868.3,523.9 l6,4 l3,0 l6,-4 L1110.784375,523.9 L1110.784375,559.1999999999999 L883.3,559.1999999999999 l-6,4 l-3,0 l-6,-4 L861.3,559.1999999999999 a8,8 0 0 1 -8,-8 Z" fill="#5b67a5"/><path d="M853.8,524.4 L868.3,524.4 l6,4 l3,0 l6,-4 L1110.284375,524.4" stroke="rgba(255,255,255,0.28)" fill="none"/><text x="864.8" y="545.4" font-family="Liberation Serif" font-style="italic" font-size="17" fill="#fff">f</text><text x="870.6" y="547.7" font-family="Liberation Serif" font-style="italic" font-size="15" fill="#fff">x</text><rect x="886.8" y="534.4" width="86.5" height="16" rx="4" fill="#fff" fill-opacity="0.65"/><text x="891.8" y="547.2" font-size="14" fill="#000" >WallWidth</text><path d="M960.8,540.9 h5 l-2.5,3.5 z" fill="#5b67a5"/><text x="978.3" y="547.4" font-size="14" fill="#fff" >.</text><rect x="986.8" y="534.4" width="50.4" height="16" rx="4" fill="#fff" fill-opacity="0.65"/><text x="991.8" y="547.2" font-size="14" fill="#000" >max</text><path d="M1024.7,540.9 h5 l-2.5,3.5 z" fill="#5b67a5"/><text x="1043.0" y="547.4" font-size="14" fill="#fff" font-weight="bold">=</text><rect x="1065.2" y="529.4" width="35.6" height="25" fill="none" stroke="#000" stroke-opacity="0.08"/><rect x="1070.2" y="534.4" width="25.6" height="16" rx="4" fill="#fff" fill-opacity="0.65"/><text x="1075.2" y="547.2" font-size="14" fill="#000" >30</text><path d="M853.5,667.8 a8,8 0 0 1 8,-8 L868.5,659.8 l6,4 l3,0 l6,-4 L1255.40625,659.8 L1255.40625,695.0999999999999 L883.5,695.0999999999999 l-6,4 l-3,0 l-6,-4 L853.5,695.0999999999999 Z" fill="#5b67a5"/><path d="M861.5,660.3 L868.5,660.3 l6,4 l3,0 l6,-4 L1254.90625,660.3" stroke="rgba(255,255,255,0.28)" fill="none"/><text x="865.0" y="681.3" font-family="Liberation Serif" font-style="italic" font-size="17" fill="#fff">f</text><text x="870.8" y="683.6" font-family="Liberation Serif" font-style="italic" font-size="15" fill="#fff">x</text><rect x="887.0" y="670.3" width="131.3" height="16" rx="4" fill="#fff" fill-opacity="0.65"/><text x="892.0" y="683.1" font-size="14" fill="#000" >DoorRoughWidth</text><path d="M1005.8,676.8 h5 l-2.5,3.5 z" fill="#5b67a5"/><text x="1023.3" y="683.3" font-size="14" fill="#fff" >.</text><rect x="1031.8" y="670.3" width="53.6" height="16" rx="4" fill="#fff" fill-opacity="0.65"/><text x="1036.8" y="683.1" font-size="14" fill="#000" >label</text><path d="M1072.9,676.8 h5 l-2.5,3.5 z" fill="#5b67a5"/><text x="1091.2" y="683.3" font-size="14" fill="#fff" font-weight="bold">=</text><path d="M1113.40625,669.8 c0,10 -8,-8 -8,7.5 s8,-2.5 8,7.5 Z" fill="#5ba58c"/><rect x="1113.4" y="664.4" width="132.5" height="26.5" fill="#5ba58c"/><g fill="#fff"><circle cx="1125.9" cy="679.1" r="2.5"/><path d="M1123.6,679.3 C1123.6,675.8 1125.4,673.0 1128.2,672.1" stroke="#fff" stroke-width="2" fill="none" stroke-linecap="round"/><circle cx="1132.3" cy="679.1" r="2.5"/><path d="M1130.0,679.3 C1130.0,675.8 1131.8,673.0 1134.6,672.1" stroke="#fff" stroke-width="2" fill="none" stroke-linecap="round"/></g><rect x="1139.4" y="670.3" width="80.0" height="16" rx="4" fill="#fff" fill-opacity="0.65"/><text x="1144.4" y="683.1" font-size="14" fill="#000" >Door Width</text><g fill="#fff" transform="rotate(180 1231.0 676.8)"><circle cx="1227.9" cy="679.1" r="2.5"/><path d="M1225.6,679.3 C1225.6,675.8 1227.4,673.0 1230.2,672.1" stroke="#fff" stroke-width="2" fill="none" stroke-linecap="round"/><circle cx="1234.3" cy="679.1" r="2.5"/><path d="M1232.0,679.3 C1232.0,675.8 1233.8,673.0 1236.6,672.1" stroke="#fff" stroke-width="2" fill="none" stroke-linecap="round"/></g><path d="M853.5,695.0999999999999 L868.5,695.0999999999999 l6,4 l3,0 l6,-4 L1144.171875,695.0999999999999 L1144.171875,730.3999999999999 L883.5,730.3999999999999 l-6,4 l-3,0 l-6,-4 L853.5,730.3999999999999 Z" fill="#5b67a5"/><path d="M854.0,695.5999999999999 L868.5,695.5999999999999 l6,4 l3,0 l6,-4 L1143.671875,695.5999999999999" stroke="rgba(255,255,255,0.28)" fill="none"/><text x="865.0" y="716.6" font-family="Liberation Serif" font-style="italic" font-size="17" fill="#fff">f</text><text x="870.8" y="718.9" font-family="Liberation Serif" font-style="italic" font-size="15" fill="#fff">x</text><rect x="887.0" y="705.6" width="131.3" height="16" rx="4" fill="#fff" fill-opacity="0.65"/><text x="892.0" y="718.4" font-size="14" fill="#000" >DoorRoughWidth</text><path d="M1005.8,712.1 h5 l-2.5,3.5 z" fill="#5b67a5"/><text x="1023.3" y="718.6" font-size="14" fill="#fff" >.</text><rect x="1031.8" y="705.6" width="46.5" height="16" rx="4" fill="#fff" fill-opacity="0.65"/><text x="1036.8" y="718.4" font-size="14" fill="#000" >min</text><path d="M1065.9,712.1 h5 l-2.5,3.5 z" fill="#5b67a5"/><text x="1084.2" y="718.6" font-size="14" fill="#fff" font-weight="bold">=</text><rect x="1106.4" y="700.6" width="27.8" height="25" fill="none" stroke="#000" stroke-opacity="0.08"/><rect x="1111.4" y="705.6" width="17.8" height="16" rx="4" fill="#fff" fill-opacity="0.65"/><text x="1116.4" y="718.4" font-size="14" fill="#000" >3</text><path d="M853.5,730.4 L868.5,730.4 l6,4 l3,0 l6,-4 L1148.0625,730.4 L1148.0625,765.6999999999999 L883.5,765.6999999999999 l-6,4 l-3,0 l-6,-4 L853.5,765.6999999999999 Z" fill="#5b67a5"/><path d="M854.0,730.9 L868.5,730.9 l6,4 l3,0 l6,-4 L1147.5625,730.9" stroke="rgba(255,255,255,0.28)" fill="none"/><text x="865.0" y="751.9" font-family="Liberation Serif" font-style="italic" font-size="17" fill="#fff">f</text><text x="870.8" y="754.2" font-family="Liberation Serif" font-style="italic" font-size="15" fill="#fff">x</text><rect x="887.0" y="740.9" width="131.3" height="16" rx="4" fill="#fff" fill-opacity="0.65"/><text x="892.0" y="753.7" font-size="14" fill="#000" >DoorRoughWidth</text><path d="M1005.8,747.4 h5 l-2.5,3.5 z" fill="#5b67a5"/><text x="1023.3" y="753.9" font-size="14" fill="#fff" >.</text><rect x="1031.8" y="740.9" width="50.4" height="16" rx="4" fill="#fff" fill-opacity="0.65"/><text x="1036.8" y="753.7" font-size="14" fill="#000" >max</text><path d="M1069.8,747.4 h5 l-2.5,3.5 z" fill="#5b67a5"/><text x="1088.1" y="753.9" font-size="14" fill="#fff" font-weight="bold">=</text><rect x="1110.3" y="735.9" width="27.8" height="25" fill="none" stroke="#000" stroke-opacity="0.08"/><rect x="1115.3" y="740.9" width="17.8" height="16" rx="4" fill="#fff" fill-opacity="0.65"/><text x="1120.3" y="753.7" font-size="14" fill="#000" >7</text><path d="M853.5,765.6999999999999 L868.5,765.6999999999999 l6,4 l3,0 l6,-4 L1202.515625,765.6999999999999 L1202.515625,800.9999999999999 L883.5,800.9999999999999 l-6,4 l-3,0 l-6,-4 L861.5,800.9999999999999 a8,8 0 0 1 -8,-8 Z" fill="#5b67a5"/><path d="M854.0,766.1999999999999 L868.5,766.1999999999999 l6,4 l3,0 l6,-4 L1202.015625,766.1999999999999" stroke="rgba(255,255,255,0.28)" fill="none"/><text x="865.0" y="787.2" font-family="Liberation Serif" font-style="italic" font-size="17" fill="#fff">f</text><text x="870.8" y="789.5" font-family="Liberation Serif" font-style="italic" font-size="15" fill="#fff">x</text><rect x="887.0" y="776.2" width="131.3" height="16" rx="4" fill="#fff" fill-opacity="0.65"/><text x="892.0" y="789.0" font-size="14" fill="#000" >DoorRoughWidth</text><path d="M1005.8,782.7 h5 l-2.5,3.5 z" fill="#5b67a5"/><text x="1023.3" y="789.2" font-size="14" fill="#fff" >.</text><rect x="1031.8" y="776.2" width="85.4" height="16" rx="4" fill="#fff" fill-opacity="0.65"/><text x="1036.8" y="789.0" font-size="14" fill="#000" >increment</text><path d="M1104.8,782.7 h5 l-2.5,3.5 z" fill="#5b67a5"/><text x="1123.1" y="789.2" font-size="14" fill="#fff" font-weight="bold">=</text><rect x="1145.3" y="771.2" width="47.2" height="25" fill="none" stroke="#000" stroke-opacity="0.08"/><rect x="1150.3" y="776.2" width="37.2" height="16" rx="4" fill="#fff" fill-opacity="0.65"/><text x="1155.3" y="789.0" font-size="14" fill="#000" >0.25</text><path d="M336.2,468.7 a8,8 0 0 1 8,-8 L351.2,460.7 l6,4 l3,0 l6,-4 L723.403125,460.7 L723.403125,496.0 L366.2,496.0 l-6,4 l-3,0 l-6,-4 L336.2,496.0 Z" fill="#5b67a5"/><path d="M344.2,461.2 L351.2,461.2 l6,4 l3,0 l6,-4 L722.903125,461.2" stroke="rgba(255,255,255,0.28)" fill="none"/><text x="347.7" y="482.2" font-family="Liberation Serif" font-style="italic" font-size="17" fill="#fff">f</text><text x="353.5" y="484.5" font-family="Liberation Serif" font-style="italic" font-size="15" fill="#fff">x</text><rect x="369.7" y="471.2" width="103.4" height="16" rx="4" fill="#fff" fill-opacity="0.65"/><text x="374.7" y="484.0" font-size="14" fill="#000" >StudSpacing</text><path d="M460.6,477.7 h5 l-2.5,3.5 z" fill="#5b67a5"/><text x="478.1" y="484.2" font-size="14" fill="#fff" >.</text><rect x="486.6" y="471.2" width="53.6" height="16" rx="4" fill="#fff" fill-opacity="0.65"/><text x="491.6" y="484.0" font-size="14" fill="#000" >label</text><path d="M527.6,477.7 h5 l-2.5,3.5 z" fill="#5b67a5"/><text x="545.9" y="484.2" font-size="14" fill="#fff" font-weight="bold">=</text><path d="M568.1375,470.7 c0,10 -8,-8 -8,7.5 s8,-2.5 8,7.5 Z" fill="#5ba58c"/><rect x="568.1" y="465.3" width="145.8" height="26.5" fill="#5ba58c"/><g fill="#fff"><circle cx="580.6" cy="480.0" r="2.5"/><path d="M578.3,480.2 C578.3,476.7 580.1,473.9 582.9,473.0" stroke="#fff" stroke-width="2" fill="none" stroke-linecap="round"/><circle cx="587.0" cy="480.0" r="2.5"/><path d="M584.7,480.2 C584.7,476.7 586.5,473.9 589.3,473.0" stroke="#fff" stroke-width="2" fill="none" stroke-linecap="round"/></g><rect x="594.1" y="471.2" width="93.3" height="16" rx="4" fill="#fff" fill-opacity="0.65"/><text x="599.1" y="484.0" font-size="14" fill="#000" >Stud Spacing</text><g fill="#fff" transform="rotate(180 699.0 477.7)"><circle cx="695.9" cy="480.0" r="2.5"/><path d="M693.6,480.2 C693.6,476.7 695.4,473.9 698.2,473.0" stroke="#fff" stroke-width="2" fill="none" stroke-linecap="round"/><circle cx="702.3" cy="480.0" r="2.5"/><path d="M700.0,480.2 C700.0,476.7 701.8,473.9 704.6,473.0" stroke="#fff" stroke-width="2" fill="none" stroke-linecap="round"/></g><path d="M336.2,496.0 L351.2,496.0 l6,4 l3,0 l6,-4 L598.903125,496.0 L598.903125,531.3 L366.2,531.3 l-6,4 l-3,0 l-6,-4 L336.2,531.3 Z" fill="#5b67a5"/><path d="M336.7,496.5 L351.2,496.5 l6,4 l3,0 l6,-4 L598.403125,496.5" stroke="rgba(255,255,255,0.28)" fill="none"/><text x="347.7" y="517.5" font-family="Liberation Serif" font-style="italic" font-size="17" fill="#fff">f</text><text x="353.5" y="519.8" font-family="Liberation Serif" font-style="italic" font-size="15" fill="#fff">x</text><rect x="369.7" y="506.5" width="103.4" height="16" rx="4" fill="#fff" fill-opacity="0.65"/><text x="374.7" y="519.3" font-size="14" fill="#000" >StudSpacing</text><path d="M460.6,513.0 h5 l-2.5,3.5 z" fill="#5b67a5"/><text x="478.1" y="519.5" font-size="14" fill="#fff" >.</text><rect x="486.6" y="506.5" width="46.5" height="16" rx="4" fill="#fff" fill-opacity="0.65"/><text x="491.6" y="519.3" font-size="14" fill="#000" >min</text><path d="M520.6,513.0 h5 l-2.5,3.5 z" fill="#5b67a5"/><text x="538.9" y="519.5" font-size="14" fill="#fff" font-weight="bold">=</text><rect x="561.1" y="501.5" width="27.8" height="25" fill="none" stroke="#000" stroke-opacity="0.08"/><rect x="566.1" y="506.5" width="17.8" height="16" rx="4" fill="#fff" fill-opacity="0.65"/><text x="571.1" y="519.3" font-size="14" fill="#000" >8</text><path d="M336.2,531.3 L351.2,531.3 l6,4 l3,0 l6,-4 L610.575,531.3 L610.575,566.5999999999999 L366.2,566.5999999999999 l-6,4 l-3,0 l-6,-4 L336.2,566.5999999999999 Z" fill="#5b67a5"/><path d="M336.7,531.8 L351.2,531.8 l6,4 l3,0 l6,-4 L610.075,531.8" stroke="rgba(255,255,255,0.28)" fill="none"/><text x="347.7" y="552.8" font-family="Liberation Serif" font-style="italic" font-size="17" fill="#fff">f</text><text x="353.5" y="555.1" font-family="Liberation Serif" font-style="italic" font-size="15" fill="#fff">x</text><rect x="369.7" y="541.8" width="103.4" height="16" rx="4" fill="#fff" fill-opacity="0.65"/><text x="374.7" y="554.6" font-size="14" fill="#000" >StudSpacing</text><path d="M460.6,548.3 h5 l-2.5,3.5 z" fill="#5b67a5"/><text x="478.1" y="554.8" font-size="14" fill="#fff" >.</text><rect x="486.6" y="541.8" width="50.4" height="16" rx="4" fill="#fff" fill-opacity="0.65"/><text x="491.6" y="554.6" font-size="14" fill="#000" >max</text><path d="M524.5,548.3 h5 l-2.5,3.5 z" fill="#5b67a5"/><text x="542.8" y="554.8" font-size="14" fill="#fff" font-weight="bold">=</text><rect x="565.0" y="536.8" width="35.6" height="25" fill="none" stroke="#000" stroke-opacity="0.08"/><rect x="570.0" y="541.8" width="25.6" height="16" rx="4" fill="#fff" fill-opacity="0.65"/><text x="575.0" y="554.6" font-size="14" fill="#000" >14</text><path d="M336.2,566.6 L351.2,566.6 l6,4 l3,0 l6,-4 L657.246875,566.6 L657.246875,601.9 L366.2,601.9 l-6,4 l-3,0 l-6,-4 L344.2,601.9 a8,8 0 0 1 -8,-8 Z" fill="#5b67a5"/><path d="M336.7,567.1 L351.2,567.1 l6,4 l3,0 l6,-4 L656.746875,567.1" stroke="rgba(255,255,255,0.28)" fill="none"/><text x="347.7" y="588.1" font-family="Liberation Serif" font-style="italic" font-size="17" fill="#fff">f</text><text x="353.5" y="590.4" font-family="Liberation Serif" font-style="italic" font-size="15" fill="#fff">x</text><rect x="369.7" y="577.1" width="103.4" height="16" rx="4" fill="#fff" fill-opacity="0.65"/><text x="374.7" y="589.9" font-size="14" fill="#000" >StudSpacing</text><path d="M460.6,583.6 h5 l-2.5,3.5 z" fill="#5b67a5"/><text x="478.1" y="590.1" font-size="14" fill="#fff" >.</text><rect x="486.6" y="577.1" width="85.4" height="16" rx="4" fill="#fff" fill-opacity="0.65"/><text x="491.6" y="589.9" font-size="14" fill="#000" >increment</text><path d="M559.5,583.6 h5 l-2.5,3.5 z" fill="#5b67a5"/><text x="577.8" y="590.1" font-size="14" fill="#fff" font-weight="bold">=</text><rect x="600.0" y="572.1" width="47.2" height="25" fill="none" stroke="#000" stroke-opacity="0.08"/><rect x="605.0" y="577.1" width="37.2" height="16" rx="4" fill="#fff" fill-opacity="0.65"/><text x="610.0" y="589.9" font-size="14" fill="#000" >0.25</text><path d="M340.2,681.8 a8,8 0 0 1 8,-8 L355.2,673.8 l6,4 l3,0 l6,-4 L767.7625,673.8 L767.7625,709.0999999999999 L370.2,709.0999999999999 l-6,4 l-3,0 l-6,-4 L340.2,709.0999999999999 Z" fill="#5b67a5"/><path d="M348.2,674.3 L355.2,674.3 l6,4 l3,0 l6,-4 L767.2625,674.3" stroke="rgba(255,255,255,0.28)" fill="none"/><text x="351.7" y="695.3" font-family="Liberation Serif" font-style="italic" font-size="17" fill="#fff">f</text><text x="357.5" y="697.6" font-family="Liberation Serif" font-style="italic" font-size="15" fill="#fff">x</text><rect x="373.7" y="684.3" width="150.8" height="16" rx="4" fill="#fff" fill-opacity="0.65"/><text x="378.7" y="697.1" font-size="14" fill="#000" >DoorDistanceCenter</text><path d="M512.0,690.8 h5 l-2.5,3.5 z" fill="#5b67a5"/><text x="529.5" y="697.3" font-size="14" fill="#fff" >.</text><rect x="538.0" y="684.3" width="53.6" height="16" rx="4" fill="#fff" fill-opacity="0.65"/><text x="543.0" y="697.1" font-size="14" fill="#000" >label</text><path d="M579.0,690.8 h5 l-2.5,3.5 z" fill="#5b67a5"/><text x="597.3" y="697.3" font-size="14" fill="#fff" font-weight="bold">=</text><path d="M619.54375,683.8 c0,10 -8,-8 -8,7.5 s8,-2.5 8,7.5 Z" fill="#5ba58c"/><rect x="619.5" y="678.4" width="138.7" height="26.5" fill="#5ba58c"/><g fill="#fff"><circle cx="632.0" cy="693.1" r="2.5"/><path d="M629.7,693.3 C629.7,689.8 631.5,687.0 634.3,686.1" stroke="#fff" stroke-width="2" fill="none" stroke-linecap="round"/><circle cx="638.4" cy="693.1" r="2.5"/><path d="M636.1,693.3 C636.1,689.8 637.9,687.0 640.7,686.1" stroke="#fff" stroke-width="2" fill="none" stroke-linecap="round"/></g><rect x="645.5" y="684.3" width="86.2" height="16" rx="4" fill="#fff" fill-opacity="0.65"/><text x="650.5" y="697.1" font-size="14" fill="#000" >Door Center</text><g fill="#fff" transform="rotate(180 743.4 690.8)"><circle cx="740.3" cy="693.1" r="2.5"/><path d="M738.0,693.3 C738.0,689.8 739.8,687.0 742.6,686.1" stroke="#fff" stroke-width="2" fill="none" stroke-linecap="round"/><circle cx="746.7" cy="693.1" r="2.5"/><path d="M744.4,693.3 C744.4,689.8 746.2,687.0 749.0,686.1" stroke="#fff" stroke-width="2" fill="none" stroke-linecap="round"/></g><path d="M340.2,709.0999999999999 L355.2,709.0999999999999 l6,4 l3,0 l6,-4 L669.7625,709.0999999999999 L669.7625,744.3999999999999 L370.2,744.3999999999999 l-6,4 l-3,0 l-6,-4 L340.2,744.3999999999999 Z" fill="#5b67a5"/><path d="M340.7,709.5999999999999 L355.2,709.5999999999999 l6,4 l3,0 l6,-4 L669.2625,709.5999999999999" stroke="rgba(255,255,255,0.28)" fill="none"/><text x="351.7" y="730.6" font-family="Liberation Serif" font-style="italic" font-size="17" fill="#fff">f</text><text x="357.5" y="732.9" font-family="Liberation Serif" font-style="italic" font-size="15" fill="#fff">x</text><rect x="373.7" y="719.6" width="150.8" height="16" rx="4" fill="#fff" fill-opacity="0.65"/><text x="378.7" y="732.4" font-size="14" fill="#000" >DoorDistanceCenter</text><path d="M512.0,726.1 h5 l-2.5,3.5 z" fill="#5b67a5"/><text x="529.5" y="732.6" font-size="14" fill="#fff" >.</text><rect x="538.0" y="719.6" width="46.5" height="16" rx="4" fill="#fff" fill-opacity="0.65"/><text x="543.0" y="732.4" font-size="14" fill="#000" >min</text><path d="M572.0,726.1 h5 l-2.5,3.5 z" fill="#5b67a5"/><text x="590.3" y="732.6" font-size="14" fill="#fff" font-weight="bold">=</text><rect x="612.5" y="714.6" width="47.2" height="25" fill="none" stroke="#000" stroke-opacity="0.08"/><rect x="617.5" y="719.6" width="37.2" height="16" rx="4" fill="#fff" fill-opacity="0.65"/><text x="622.5" y="732.4" font-size="14" fill="#000" >4.75</text><path d="M340.2,744.4 L355.2,744.4 l6,4 l3,0 l6,-4 L661.98125,744.4 L661.98125,779.6999999999999 L370.2,779.6999999999999 l-6,4 l-3,0 l-6,-4 L340.2,779.6999999999999 Z" fill="#5b67a5"/><path d="M340.7,744.9 L355.2,744.9 l6,4 l3,0 l6,-4 L661.48125,744.9" stroke="rgba(255,255,255,0.28)" fill="none"/><text x="351.7" y="765.9" font-family="Liberation Serif" font-style="italic" font-size="17" fill="#fff">f</text><text x="357.5" y="768.2" font-family="Liberation Serif" font-style="italic" font-size="15" fill="#fff">x</text><rect x="373.7" y="754.9" width="150.8" height="16" rx="4" fill="#fff" fill-opacity="0.65"/><text x="378.7" y="767.7" font-size="14" fill="#000" >DoorDistanceCenter</text><path d="M512.0,761.4 h5 l-2.5,3.5 z" fill="#5b67a5"/><text x="529.5" y="767.9" font-size="14" fill="#fff" >.</text><rect x="538.0" y="754.9" width="50.4" height="16" rx="4" fill="#fff" fill-opacity="0.65"/><text x="543.0" y="767.7" font-size="14" fill="#000" >max</text><path d="M575.9,761.4 h5 l-2.5,3.5 z" fill="#5b67a5"/><text x="594.2" y="767.9" font-size="14" fill="#fff" font-weight="bold">=</text><rect x="616.4" y="749.9" width="35.6" height="25" fill="none" stroke="#000" stroke-opacity="0.08"/><rect x="621.4" y="754.9" width="25.6" height="16" rx="4" fill="#fff" fill-opacity="0.65"/><text x="626.4" y="767.7" font-size="14" fill="#000" >20</text><path d="M340.2,779.6999999999999 L355.2,779.6999999999999 l6,4 l3,0 l6,-4 L708.653125,779.6999999999999 L708.653125,814.9999999999999 L370.2,814.9999999999999 l-6,4 l-3,0 l-6,-4 L348.2,814.9999999999999 a8,8 0 0 1 -8,-8 Z" fill="#5b67a5"/><path d="M340.7,780.1999999999999 L355.2,780.1999999999999 l6,4 l3,0 l6,-4 L708.153125,780.1999999999999" stroke="rgba(255,255,255,0.28)" fill="none"/><text x="351.7" y="801.2" font-family="Liberation Serif" font-style="italic" font-size="17" fill="#fff">f</text><text x="357.5" y="803.5" font-family="Liberation Serif" font-style="italic" font-size="15" fill="#fff">x</text><rect x="373.7" y="790.2" width="150.8" height="16" rx="4" fill="#fff" fill-opacity="0.65"/><text x="378.7" y="803.0" font-size="14" fill="#000" >DoorDistanceCenter</text><path d="M512.0,796.7 h5 l-2.5,3.5 z" fill="#5b67a5"/><text x="529.5" y="803.2" font-size="14" fill="#fff" >.</text><rect x="538.0" y="790.2" width="85.4" height="16" rx="4" fill="#fff" fill-opacity="0.65"/><text x="543.0" y="803.0" font-size="14" fill="#000" >increment</text><path d="M610.9,796.7 h5 l-2.5,3.5 z" fill="#5b67a5"/><text x="629.2" y="803.2" font-size="14" fill="#fff" font-weight="bold">=</text><rect x="651.4" y="785.2" width="47.2" height="25" fill="none" stroke="#000" stroke-opacity="0.08"/><rect x="656.4" y="790.2" width="37.2" height="16" rx="4" fill="#fff" fill-opacity="0.65"/><text x="661.4" y="803.0" font-size="14" fill="#000" >0.25</text><path d="M343.4,894.0 a8,8 0 0 1 8,-8 L358.4,886.0 l6,4 l3,0 l6,-4 L754.65,886.0 L754.65,921.3 L373.4,921.3 l-6,4 l-3,0 l-6,-4 L343.4,921.3 Z" fill="#5b67a5"/><path d="M351.4,886.5 L358.4,886.5 l6,4 l3,0 l6,-4 L754.15,886.5" stroke="rgba(255,255,255,0.28)" fill="none"/><text x="354.9" y="907.5" font-family="Liberation Serif" font-style="italic" font-size="17" fill="#fff">f</text><text x="360.7" y="909.8" font-family="Liberation Serif" font-style="italic" font-size="15" fill="#fff">x</text><rect x="376.9" y="896.5" width="136.0" height="16" rx="4" fill="#fff" fill-opacity="0.65"/><text x="381.9" y="909.3" font-size="14" fill="#000" >DoorRoughHeight</text><path d="M500.4,903.0 h5 l-2.5,3.5 z" fill="#5b67a5"/><text x="517.9" y="909.5" font-size="14" fill="#fff" >.</text><rect x="526.4" y="896.5" width="53.6" height="16" rx="4" fill="#fff" fill-opacity="0.65"/><text x="531.4" y="909.3" font-size="14" fill="#000" >label</text><path d="M567.5,903.0 h5 l-2.5,3.5 z" fill="#5b67a5"/><text x="585.8" y="909.5" font-size="14" fill="#fff" font-weight="bold">=</text><path d="M607.978125,896.0 c0,10 -8,-8 -8,7.5 s8,-2.5 8,7.5 Z" fill="#5ba58c"/><rect x="608.0" y="890.6" width="137.2" height="26.5" fill="#5ba58c"/><g fill="#fff"><circle cx="620.5" cy="905.3" r="2.5"/><path d="M618.2,905.5 C618.2,902.0 620.0,899.2 622.8,898.3" stroke="#fff" stroke-width="2" fill="none" stroke-linecap="round"/><circle cx="626.9" cy="905.3" r="2.5"/><path d="M624.6,905.5 C624.6,902.0 626.4,899.2 629.2,898.3" stroke="#fff" stroke-width="2" fill="none" stroke-linecap="round"/></g><rect x="634.0" y="896.5" width="84.7" height="16" rx="4" fill="#fff" fill-opacity="0.65"/><text x="639.0" y="909.3" font-size="14" fill="#000" >Door Height</text><g fill="#fff" transform="rotate(180 730.2 903.0)"><circle cx="727.1" cy="905.3" r="2.5"/><path d="M724.9,905.5 C724.9,902.0 726.6,899.2 729.4,898.3" stroke="#fff" stroke-width="2" fill="none" stroke-linecap="round"/><circle cx="733.5" cy="905.3" r="2.5"/><path d="M731.2,905.5 C731.2,902.0 733.0,899.2 735.8,898.3" stroke="#fff" stroke-width="2" fill="none" stroke-linecap="round"/></g><path d="M343.4,921.3 L358.4,921.3 l6,4 l3,0 l6,-4 L638.74375,921.3 L638.74375,956.5999999999999 L373.4,956.5999999999999 l-6,4 l-3,0 l-6,-4 L343.4,956.5999999999999 Z" fill="#5b67a5"/><path d="M343.9,921.8 L358.4,921.8 l6,4 l3,0 l6,-4 L638.24375,921.8" stroke="rgba(255,255,255,0.28)" fill="none"/><text x="354.9" y="942.8" font-family="Liberation Serif" font-style="italic" font-size="17" fill="#fff">f</text><text x="360.7" y="945.1" font-family="Liberation Serif" font-style="italic" font-size="15" fill="#fff">x</text><rect x="376.9" y="931.8" width="136.0" height="16" rx="4" fill="#fff" fill-opacity="0.65"/><text x="381.9" y="944.6" font-size="14" fill="#000" >DoorRoughHeight</text><path d="M500.4,938.3 h5 l-2.5,3.5 z" fill="#5b67a5"/><text x="517.9" y="944.8" font-size="14" fill="#fff" >.</text><rect x="526.4" y="931.8" width="46.5" height="16" rx="4" fill="#fff" fill-opacity="0.65"/><text x="531.4" y="944.6" font-size="14" fill="#000" >min</text><path d="M560.5,938.3 h5 l-2.5,3.5 z" fill="#5b67a5"/><text x="578.8" y="944.8" font-size="14" fill="#fff" font-weight="bold">=</text><rect x="601.0" y="926.8" width="27.8" height="25" fill="none" stroke="#000" stroke-opacity="0.08"/><rect x="606.0" y="931.8" width="17.8" height="16" rx="4" fill="#fff" fill-opacity="0.65"/><text x="611.0" y="944.6" font-size="14" fill="#000" >3</text><path d="M343.4,956.6 L358.4,956.6 l6,4 l3,0 l6,-4 L642.634375,956.6 L642.634375,991.9 L373.4,991.9 l-6,4 l-3,0 l-6,-4 L343.4,991.9 Z" fill="#5b67a5"/><path d="M343.9,957.1 L358.4,957.1 l6,4 l3,0 l6,-4 L642.134375,957.1" stroke="rgba(255,255,255,0.28)" fill="none"/><text x="354.9" y="978.1" font-family="Liberation Serif" font-style="italic" font-size="17" fill="#fff">f</text><text x="360.7" y="980.4" font-family="Liberation Serif" font-style="italic" font-size="15" fill="#fff">x</text><rect x="376.9" y="967.1" width="136.0" height="16" rx="4" fill="#fff" fill-opacity="0.65"/><text x="381.9" y="979.9" font-size="14" fill="#000" >DoorRoughHeight</text><path d="M500.4,973.6 h5 l-2.5,3.5 z" fill="#5b67a5"/><text x="517.9" y="980.1" font-size="14" fill="#fff" >.</text><rect x="526.4" y="967.1" width="50.4" height="16" rx="4" fill="#fff" fill-opacity="0.65"/><text x="531.4" y="979.9" font-size="14" fill="#000" >max</text><path d="M564.4,973.6 h5 l-2.5,3.5 z" fill="#5b67a5"/><text x="582.7" y="980.1" font-size="14" fill="#fff" font-weight="bold">=</text><rect x="604.9" y="962.1" width="27.8" height="25" fill="none" stroke="#000" stroke-opacity="0.08"/><rect x="609.9" y="967.1" width="17.8" height="16" rx="4" fill="#fff" fill-opacity="0.65"/><text x="614.9" y="979.9" font-size="14" fill="#000" >8</text><path d="M343.4,991.9 L358.4,991.9 l6,4 l3,0 l6,-4 L697.0875,991.9 L697.0875,1027.2 L373.4,1027.2 l-6,4 l-3,0 l-6,-4 L351.4,1027.2 a8,8 0 0 1 -8,-8 Z" fill="#5b67a5"/><path d="M343.9,992.4 L358.4,992.4 l6,4 l3,0 l6,-4 L696.5875,992.4" stroke="rgba(255,255,255,0.28)" fill="none"/><text x="354.9" y="1013.4" font-family="Liberation Serif" font-style="italic" font-size="17" fill="#fff">f</text><text x="360.7" y="1015.7" font-family="Liberation Serif" font-style="italic" font-size="15" fill="#fff">x</text><rect x="376.9" y="1002.4" width="136.0" height="16" rx="4" fill="#fff" fill-opacity="0.65"/><text x="381.9" y="1015.2" font-size="14" fill="#000" >DoorRoughHeight</text><path d="M500.4,1008.9 h5 l-2.5,3.5 z" fill="#5b67a5"/><text x="517.9" y="1015.4" font-size="14" fill="#fff" >.</text><rect x="526.4" y="1002.4" width="85.4" height="16" rx="4" fill="#fff" fill-opacity="0.65"/><text x="531.4" y="1015.2" font-size="14" fill="#000" >increment</text><path d="M599.4,1008.9 h5 l-2.5,3.5 z" fill="#5b67a5"/><text x="617.7" y="1015.4" font-size="14" fill="#fff" font-weight="bold">=</text><rect x="639.9" y="997.4" width="47.2" height="25" fill="none" stroke="#000" stroke-opacity="0.08"/><rect x="644.9" y="1002.4" width="37.2" height="16" rx="4" fill="#fff" fill-opacity="0.65"/><text x="649.9" y="1015.2" font-size="14" fill="#000" >0.25</text><path d="M342.5,303.0 L357.5,303.0 l6,4 l3,0 l6,-4 L798.0,303.0 L798.0,365.0 L372.5,365.0 l-6,4 l-3,0 l-6,-4 L350.5,365.0 a8,8 0 0 1 -8,-8 Z" fill="#5b67a5"/><path d="M343.0,303.5 L357.5,303.5 l6,4 l3,0 l6,-4 L797.5,303.5" stroke="rgba(255,255,255,0.28)" fill="none"/><text x="354.0" y="337.5" font-family="Liberation Serif" font-style="italic" font-size="17" fill="#fff">f</text><text x="359.8" y="339.8" font-family="Liberation Serif" font-style="italic" font-size="15" fill="#fff">x</text><rect x="376.0" y="326.5" width="59.0" height="16" rx="4" fill="#fff" fill-opacity="0.65"/><text x="381.0" y="339.3" font-size="14" fill="#000" >Stock</text><path d="M422.5,333.0 h5 l-2.5,3.5 z" fill="#5b67a5"/><text x="440.0" y="339.5" font-size="14" fill="#fff" >.</text><rect x="448.5" y="326.5" width="64.5" height="16" rx="4" fill="#fff" fill-opacity="0.65"/><text x="453.5" y="339.3" font-size="14" fill="#000" >values</text><path d="M500.5,333.0 h5 l-2.5,3.5 z" fill="#5b67a5"/><text x="517.5" y="339.5" font-size="14" fill="#fff" font-weight="bold">=</text><path d="M540.5,312 c0,10 -8,-8 -8,7.5 s8,-2.5 8,7.5 Z" fill="#745ba5"/><rect x="540.5" y="307" width="164.5" height="53.6" fill="#745ba5"/><text x="551.0" y="327.5" font-size="16" fill="#fff" >+</text><text x="578.0" y="327.5" font-size="16" fill="#fff" >−</text><text x="600.5" y="327.0" font-size="14" fill="#fff" >create list with</text><path d="M705,312.0 c0,10 -8,-8 -8,7.5 s8,-2.5 8,7.5 Z" fill="#5ba58c"/><rect x="705" y="307.0" width="83" height="26.8" fill="#5ba58c"/><g fill="#fff"><circle cx="717.5" cy="322.3" r="2.5"/><path d="M715.2,322.5 C715.2,319.0 717.0,316.2 719.8,315.3" stroke="#fff" stroke-width="2" fill="none" stroke-linecap="round"/><circle cx="723.9" cy="322.3" r="2.5"/><path d="M721.6,322.5 C721.6,319.0 723.4,316.2 726.2,315.3" stroke="#fff" stroke-width="2" fill="none" stroke-linecap="round"/></g><rect x="731.0" y="313.7" width="32.6" height="16" rx="4" fill="#fff" fill-opacity="0.65"/><text x="736.0" y="326.5" font-size="14" fill="#000" >2x4</text><g fill="#fff" transform="rotate(180 774.1 320.0)"><circle cx="771.0" cy="322.3" r="2.5"/><path d="M768.7,322.5 C768.7,319.0 770.5,316.2 773.3,315.3" stroke="#fff" stroke-width="2" fill="none" stroke-linecap="round"/><circle cx="777.4" cy="322.3" r="2.5"/><path d="M775.1,322.5 C775.1,319.0 776.9,316.2 779.7,315.3" stroke="#fff" stroke-width="2" fill="none" stroke-linecap="round"/></g><path d="M705,338.8 c0,10 -8,-8 -8,7.5 s8,-2.5 8,7.5 Z" fill="#5ba58c"/><rect x="705" y="333.8" width="83" height="26.8" fill="#5ba58c"/><g fill="#fff"><circle cx="717.5" cy="349.1" r="2.5"/><path d="M715.2,349.3 C715.2,345.8 717.0,343.0 719.8,342.1" stroke="#fff" stroke-width="2" fill="none" stroke-linecap="round"/><circle cx="723.9" cy="349.1" r="2.5"/><path d="M721.6,349.3 C721.6,345.8 723.4,343.0 726.2,342.1" stroke="#fff" stroke-width="2" fill="none" stroke-linecap="round"/></g><rect x="731.0" y="340.5" width="32.6" height="16" rx="4" fill="#fff" fill-opacity="0.65"/><text x="736.0" y="353.3" font-size="14" fill="#000" >2x6</text><g fill="#fff" transform="rotate(180 774.1 346.8)"><circle cx="771.0" cy="349.1" r="2.5"/><path d="M768.7,349.3 C768.7,345.8 770.5,343.0 773.3,342.1" stroke="#fff" stroke-width="2" fill="none" stroke-linecap="round"/><circle cx="777.4" cy="349.1" r="2.5"/><path d="M775.1,349.3 C775.1,345.8 776.9,343.0 779.7,342.1" stroke="#fff" stroke-width="2" fill="none" stroke-linecap="round"/></g><line x1="705" y1="334.4" x2="788" y2="334.4" stroke="#000" stroke-opacity="0.12"/><path d="M342.5,276.75 a8,8 0 0 1 8,-8 L357.5,268.75 l6,4 l3,0 l6,-4 L667.8,268.75 L667.8,303.0 L372.5,303.0 l-6,4 l-3,0 l-6,-4 L342.5,303.0 Z" fill="#5b67a5"/><path d="M350.5,269.25 L357.5,269.25 l6,4 l3,0 l6,-4 L667.3,269.25" stroke="rgba(255,255,255,0.28)" fill="none"/><text x="354.0" y="289.8" font-family="Liberation Serif" font-style="italic" font-size="17" fill="#fff">f</text><text x="359.8" y="292.1" font-family="Liberation Serif" font-style="italic" font-size="15" fill="#fff">x</text><rect x="376.0" y="278.8" width="59.0" height="16" rx="4" fill="#fff" fill-opacity="0.65"/><text x="381.0" y="291.6" font-size="14" fill="#000" >Stock</text><path d="M422.5,285.2 h5 l-2.5,3.5 z" fill="#5b67a5"/><text x="440.0" y="291.8" font-size="14" fill="#fff" >.</text><rect x="448.5" y="278.8" width="53.6" height="16" rx="4" fill="#fff" fill-opacity="0.65"/><text x="453.5" y="291.6" font-size="14" fill="#000" >label</text><path d="M489.6,285.2 h5 l-2.5,3.5 z" fill="#5b67a5"/><text x="506.6" y="291.8" font-size="14" fill="#fff" font-weight="bold">=</text><path d="M530.078125,277.75 c0,10 -8,-8 -8,7.5 s8,-2.5 8,7.5 Z" fill="#5ba58c"/><rect x="530.1" y="272.8" width="128.2" height="26.6" fill="#5ba58c"/><g fill="#fff"><circle cx="542.6" cy="287.6" r="2.5"/><path d="M540.3,287.8 C540.3,284.2 542.1,281.4 544.9,280.6" stroke="#fff" stroke-width="2" fill="none" stroke-linecap="round"/><circle cx="549.0" cy="287.6" r="2.5"/><path d="M546.7,287.8 C546.7,284.2 548.5,281.4 551.3,280.6" stroke="#fff" stroke-width="2" fill="none" stroke-linecap="round"/></g><rect x="556.1" y="278.8" width="76.1" height="16" rx="4" fill="#fff" fill-opacity="0.65"/><text x="561.1" y="291.6" font-size="14" fill="#000" >Stock Size</text><g fill="#fff" transform="rotate(180 643.6 285.2)"><circle cx="640.5" cy="287.6" r="2.5"/><path d="M638.2,287.8 C638.2,284.2 640.0,281.4 642.8,280.6" stroke="#fff" stroke-width="2" fill="none" stroke-linecap="round"/><circle cx="646.9" cy="287.6" r="2.5"/><path d="M644.6,287.8 C644.6,284.2 646.4,281.4 649.2,280.6" stroke="#fff" stroke-width="2" fill="none" stroke-linecap="round"/></g><rect x="1367" y="435" width="22.5" height="475" rx="11.25" fill="#cccccc"/><rect x="576" y="1101.5" width="574" height="22" rx="11" fill="#cccccc"/><path d="M306,221 H593 a8,8 0 0 1 8,8 V1126 H306 Z" fill="#d8d8d8" fill-opacity="0.8"/><path d="M320,233.6 c0,10 -8,-8 -8,7.5 s8,-2.5 8,7.5 Z" fill="#5b67a5"/><rect x="320" y="228.6" width="202.2" height="28.9" fill="#5b67a5"/><path d="M320.5,229.1 H521.7" stroke="rgba(255,255,255,0.28)" fill="none"/><text x="332.5" y="246.6" font-family="Liberation Serif" font-style="italic" font-size="17" fill="#fff">f</text><text x="338.3" y="248.9" font-family="Liberation Serif" font-style="italic" font-size="15" fill="#fff">x</text><rect x="353.4" y="235.6" width="91.4" height="16" rx="4" fill="#fff" fill-opacity="0.65"/><text x="358.4" y="248.4" font-size="14" fill="#000" >WallHeight</text><path d="M432.3,242.1 h5 l-2.5,3.5 z" fill="#5b67a5"/><text x="449.0" y="248.5" font-size="14" fill="#fff" >.</text><rect x="458.9" y="235.6" width="57.8" height="16" rx="4" fill="#fff" fill-opacity="0.65"/><text x="463.9" y="248.4" font-size="14" fill="#000" >value</text><path d="M504.2,242.1 h5 l-2.5,3.5 z" fill="#5b67a5"/><path d="M320,289 a8,8 0 0 1 8,-8 L335,281 l6,4 l3,0 l6,-4 L568.3,281 L568.3,314.5 L350,314.5 l-6,4 l-3,0 l-6,-4 L328,314.5 a8,8 0 0 1 -8,-8 Z" fill="#5b67a5"/><path d="M328,281.5 L335,281.5 l6,4 l3,0 l6,-4 L567.8,281.5" stroke="rgba(255,255,255,0.28)" fill="none"/><text x="332.5" y="301.3" font-family="Liberation Serif" font-style="italic" font-size="17" fill="#fff">f</text><text x="338.3" y="303.6" font-family="Liberation Serif" font-style="italic" font-size="15" fill="#fff">x</text><rect x="353.4" y="290.3" width="91.4" height="16" rx="4" fill="#fff" fill-opacity="0.65"/><text x="358.4" y="303.1" font-size="14" fill="#000" >WallHeight</text><path d="M432.3,296.8 h5 l-2.5,3.5 z" fill="#5b67a5"/><text x="449.0" y="303.3" font-size="14" fill="#fff" >.</text><rect x="458.9" y="290.3" width="57.8" height="16" rx="4" fill="#fff" fill-opacity="0.65"/><text x="463.9" y="303.1" font-size="14" fill="#000" >value</text><path d="M504.2,296.8 h5 l-2.5,3.5 z" fill="#5b67a5"/><text x="521.5" y="303.3" font-size="14" fill="#fff" font-weight="bold">=</text><path d="M545,285.6 H559.7 V310.3 H545 V300 c0,-8 -7,6 -7,-4.5 s7,3 7,-5 Z" fill="#ccd0d4"/><path d="M320,350.7 a8,8 0 0 1 8,-8 L335,342.7 l6,4 l3,0 l6,-4 L445.6,342.7 L445.6,366.9 L350,366.9 l-6,4 l-3,0 l-6,-4 L328,366.9 a8,8 0 0 1 -8,-8 Z" fill="#5ba5a5"/><text x="329.0" y="360.0" font-size="14" fill="#fff" font-style="italic">//</text><rect x="342.5" y="347.3" width="97.7" height="15" rx="4" fill="#fff" fill-opacity="0.7"/><text x="347.0" y="359.5" font-size="14" fill="#000" >comment here</text><circle cx="1318.6" cy="250" r="5.8" stroke="#b9bdc1" stroke-width="3.2" fill="none"/><path d="M1295.7,276 a23,24 0 0 1 45.8,0 V304 a8,8 0 0 1 -8,8 H1303.7 a8,8 0 0 1 -8,-8 Z" fill="#b9bdc1"/><path d="M1303.5,279.5 H1332 V289" stroke="#fff" stroke-width="4" fill="none"/><path d="M1310,805 h7 l-7,7 z" fill="#b9bfc6"/><path d="M1312,807 l6,6" stroke="#b9bfc6" stroke-width="2.8"/><path d="M1336,805 h-7 l7,7 z" fill="#b9bfc6"/><path d="M1334,807 l-6,6" stroke="#b9bfc6" stroke-width="2.8"/><path d="M1310,831 h7 l-7,-7 z" fill="#b9bfc6"/><path d="M1312,829 l6,-6" stroke="#b9bfc6" stroke-width="2.8"/><path d="M1336,831 h-7 l7,-7 z" fill="#b9bfc6"/><path d="M1334,829 l-6,-6" stroke="#b9bfc6" stroke-width="2.8"/><circle cx="1323" cy="877.2" r="12.5" stroke="#c8c8c8" stroke-width="2" fill="none"/><circle cx="1323" cy="877.2" r="4.5" fill="#c8c8c8"/><path d="M1323,861 v5 M1323,888.5 v5 M1307,877.2 h5 M1334,877.2 h5" stroke="#c8c8c8" stroke-width="2"/><circle cx="1323" cy="926.6" r="17.5" stroke="#c8c8c8" stroke-width="2" fill="#fff"/><path d="M1313,926.6 h20 M1323,916.6 v20" stroke="#c8c8c8" stroke-width="2"/><circle cx="1323" cy="965.5" r="17.5" stroke="#c8c8c8" stroke-width="2" fill="#fff"/><path d="M1313,965.5 h20" stroke="#c8c8c8" stroke-width="2"/><rect x="1290.5" y="1016" width="47.8" height="7.5" rx="1" fill="#c8c8c8"/><path d="M1304,1016 a10,3.5 0 0 1 20,0 Z" fill="#c8c8c8"/><path d="M1293.5,1027.7 H1334.4 V1070 a4.5,4.5 0 0 1 -4.5,4.5 H1298 a4.5,4.5 0 0 1 -4.5,-4.5 Z" fill="#c8c8c8"/></g></svg><div class="a" style="left:1393px;top:220px;width:447px;height:905px;background:#f5f5f5"></div><div class="a" style="left:184px;top:86.5px;width:17px;height:18.5px;background:#c9a227;border-radius:2px"></div><div class="a" style="left:184px;top:99px;width:17px;height:6px;background:#7a6220;border-radius:0 0 2px 2px"></div><div class="t" style="left:190px;top:88px;font-size:9px;color:#fff;font-weight:bold">I</div><div class="a" style="left:1702px;top:95px;width:12px;height:1.6px;background:#222"></div><div class="a" style="left:1754.5px;top:90px;width:11px;height:11px;border:1.6px solid #222"></div><svg class="a" style="left:1806px;top:89px" width="14" height="14"><path d="M1,1 L13,13 M13,1 L1,13" stroke="#222" stroke-width="1.6"/></svg><div class="a" style="left:1622.5px;top:121px;width:72.5px;height:35px;border:1.5px solid #9fd0ee;border-radius:4px;background:#fff"></div><div class="t" style="left:1641px;top:130px;font-size:16px;color:#3e97d3;letter-spacing:0.5px">Save</div><div class="a" style="left:1707px;top:121px;width:74.5px;height:35px;background:#3e97d3;border-radius:4px;box-shadow:0 1px 2px rgba(0,0,0,0.2)"></div><div class="t" style="left:1718px;top:130px;font-size:16px;color:#fff;letter-spacing:0.5px">Publish</div><svg class="a" style="left:1792px;top:128px" width="21" height="21"><circle cx="10.5" cy="10.5" r="9" stroke="#555" stroke-width="1.6" fill="none"/><text x="10.5" y="15.5" text-anchor="middle" font-size="14" fill="#555" font-family="Liberation Sans">?</text></svg><svg class="a" style="left:1440px;top:235px" width="360" height="40" stroke="#222" stroke-width="2" fill="none" stroke-linecap="round" stroke-linejoin="round">
<path d="M12,27 V8 a2,2 0 0 1 2,-2 H30 a2,2 0 0 1 2,2 V30 a2,2 0 0 1 -2,2 H20"/><path d="M17,12 H27 M17,17 H27 M17,22 H24"/><path d="M10,33 c0,-6 4,-9 11,-9 M18,21 l3,3 -3,3"/>
<path d="M59,30 V8 a2,2 0 0 1 2,-2 H77 a2,2 0 0 1 2,2 V20"/><path d="M59,30 a2,2 0 0 0 2,2 H66"/><path d="M64,12 H74 M64,17 H74 M64,22 H69"/><path d="M72,32 a6,6 0 1 0 -2,-6 M69,22 v4 h4"/>
<path d="M276,17 l9,-4 9,4 v11 l-9,4 -9,-4 z M276,17 l9,4 9,-4 M285,21 v11"/><path d="M285,15 V6 M281,9 l4,-4 4,4"/>
<path d="M321,17 l9,-4 9,4 v11 l-9,4 -9,-4 z M321,17 l9,4 9,-4 M330,21 v11"/><path d="M330,5 V14 M326,11 l4,4 4,-4"/>
</svg><div class="a" style="left:1440px;top:308.3px;width:342px;height:41.5px;background:#fff;border:1px solid #c6c6c6;border-radius:4px"></div><div class="a" style="left:1450px;top:307.3px;width:98.90625px;height:3px;background:#f5f5f5"></div><div class="a" style="left:1450px;top:307.3px;width:98.90625px;height:3px;background:#fff;top:308.3px;height:2px"></div><div class="t" style="left:1456px;top:299.8px;font-size:12px;color:#777;letter-spacing:0.5px">Wall Height (ft)</div><div class="t" style="left:1456px;top:320.3px;font-size:15px;color:#222;">10</div><div class="t" style="left:1456px;top:358.3px;font-size:14px;color:#808080;letter-spacing:0.15px">9 to 16</div><div class="a" style="left:1440px;top:401px;width:342px;height:41.5px;background:#fff;border:1px solid #c6c6c6;border-radius:4px"></div><div class="a" style="left:1450px;top:400px;width:94.390625px;height:3px;background:#f5f5f5"></div><div class="a" style="left:1450px;top:400px;width:94.390625px;height:3px;background:#fff;top:401px;height:2px"></div><div class="t" style="left:1456px;top:392.5px;font-size:12px;color:#777;letter-spacing:0.5px">Wall Width (ft)</div><div class="t" style="left:1456px;top:413px;font-size:15px;color:#222;">10</div><div class="t" style="left:1456px;top:451px;font-size:14px;color:#808080;letter-spacing:0.15px">9 to 30</div><div class="a" style="left:1440px;top:493.3px;width:342px;height:41.5px;background:#fff;border:1px solid #c6c6c6;border-radius:4px"></div><div class="a" style="left:1450px;top:492.3px;width:73.671875px;height:3px;background:#f5f5f5"></div><div class="a" style="left:1450px;top:492.3px;width:73.671875px;height:3px;background:#fff;top:493.3px;height:2px"></div><div class="t" style="left:1456px;top:484.8px;font-size:12px;color:#777;letter-spacing:0.5px">Stock Size</div><div class="t" style="left:1456px;top:505.3px;font-size:15px;color:#222;">2x4</div><div class="a" style="left:1755px;top:511.3px;width:0;height:0;border-left:6px solid transparent;border-right:6px solid transparent;border-top:6px solid #333"></div><div class="a" style="left:1440px;top:558.3px;width:342px;height:41.5px;background:#fff;border:1px solid #c6c6c6;border-radius:4px"></div><div class="a" style="left:1450px;top:557.3px;width:112.53125px;height:3px;background:#f5f5f5"></div><div class="a" style="left:1450px;top:557.3px;width:112.53125px;height:3px;background:#fff;top:558.3px;height:2px"></div><div class="t" style="left:1456px;top:549.8px;font-size:12px;color:#777;letter-spacing:0.5px">Stud Spacing (in)</div><div class="t" style="left:1456px;top:570.3px;font-size:15px;color:#222;">8</div><div class="t" style="left:1456px;top:608.3px;font-size:14px;color:#808080;letter-spacing:0.15px">8 to 14 - increments of 0.25</div><div class="a" style="left:1440px;top:651px;width:342px;height:41.5px;background:#fff;border:1px solid #c6c6c6;border-radius:4px"></div><div class="a" style="left:1450px;top:650px;width:103.34375px;height:3px;background:#f5f5f5"></div><div class="a" style="left:1450px;top:650px;width:103.34375px;height:3px;background:#fff;top:651px;height:2px"></div><div class="t" style="left:1456px;top:642.5px;font-size:12px;color:#777;letter-spacing:0.5px">Door Center (ft)</div><div class="t" style="left:1456px;top:663px;font-size:15px;color:#222;">13.25</div><div class="t" style="left:1456px;top:701px;font-size:14px;color:#808080;letter-spacing:0.15px">4.75 to 20 - increments of 0.25</div><div class="a" style="left:1440px;top:743.7px;width:342px;height:41.5px;background:#fff;border:1px solid #c6c6c6;border-radius:4px"></div><div class="a" style="left:1450px;top:742.7px;width:102.015625px;height:3px;background:#f5f5f5"></div><div class="a" style="left:1450px;top:742.7px;width:102.015625px;height:3px;background:#fff;top:743.7px;height:2px"></div><div class="t" style="left:1456px;top:735.2px;font-size:12px;color:#777;letter-spacing:0.5px">Door Height (ft)</div><div class="t" style="left:1456px;top:755.7px;font-size:15px;color:#222;">7</div><div class="t" style="left:1456px;top:793.7px;font-size:14px;color:#808080;letter-spacing:0.15px">3 to 8 - increments of 0.25</div><div class="a" style="left:1440px;top:836.2px;width:342px;height:41.5px;background:#fff;border:1px solid #c6c6c6;border-radius:4px"></div><div class="a" style="left:1450px;top:835.2px;width:97.5px;height:3px;background:#f5f5f5"></div><div class="a" style="left:1450px;top:835.2px;width:97.5px;height:3px;background:#fff;top:836.2px;height:2px"></div><div class="t" style="left:1456px;top:827.7px;font-size:12px;color:#777;letter-spacing:0.5px">Door Width (ft)</div><div class="t" style="left:1456px;top:848.2px;font-size:15px;color:#222;">4</div><div class="t" style="left:1456px;top:886.2px;font-size:14px;color:#808080;letter-spacing:0.15px">3 to 7 - increments of 0.25</div>
</body></html>
